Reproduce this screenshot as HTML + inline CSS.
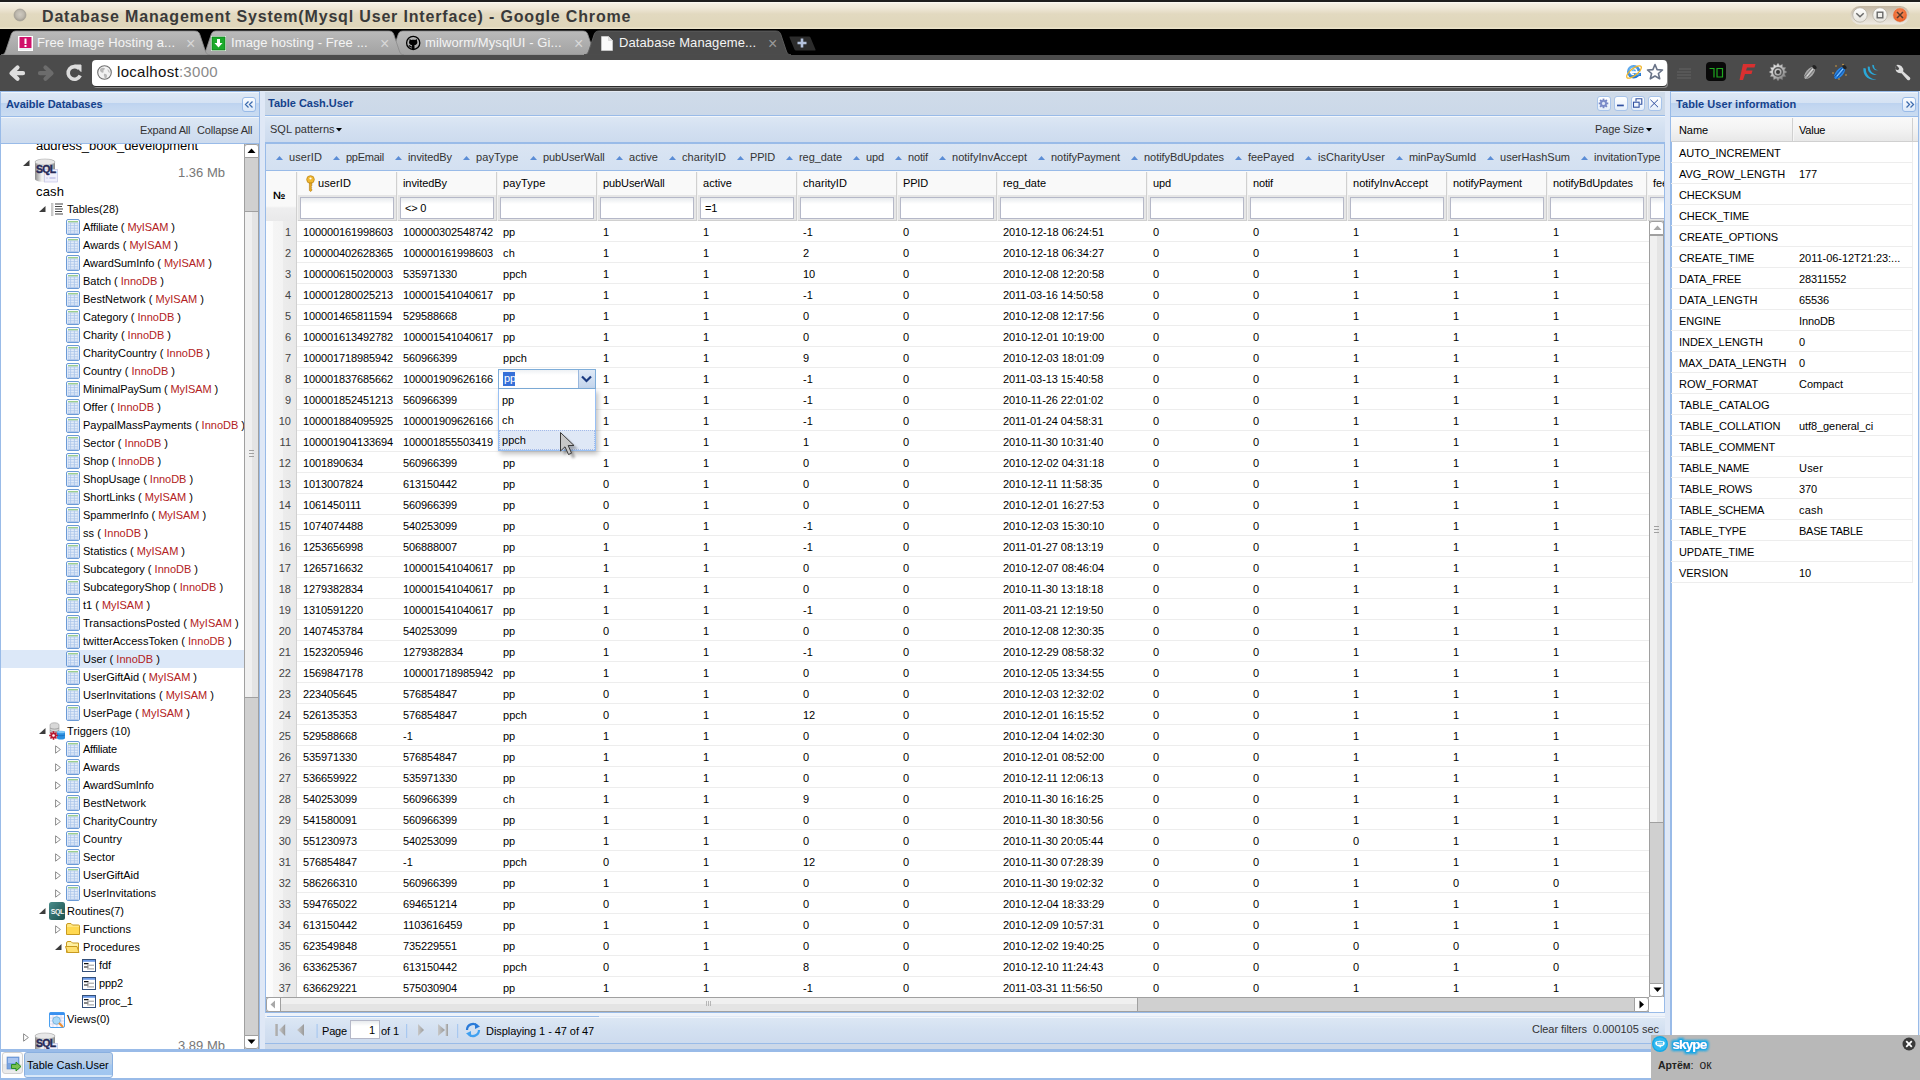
<!DOCTYPE html><html><head><meta charset="utf-8"><style>
*{box-sizing:border-box;margin:0;padding:0}
html,body{width:1920px;height:1080px;overflow:hidden;background:#fff}
body{font-family:"Liberation Sans",sans-serif;font-size:11px;color:#000;position:relative}
.a{position:absolute;white-space:nowrap}
svg{position:absolute;overflow:visible}

.ph{background:linear-gradient(#f0f6fd 0,#f0f6fd 1px,#dde8f5 1px,#d5e2f3 11px,#bcd2ef 11px,#c2d6f0 14px,#cadcf1 100%);border-bottom:1px solid #99bbe8}
.ptitle{font-weight:bold;color:#15428b;font-size:11px}
.tbar{background:linear-gradient(#f2f6fb 0,#f2f6fb 1px,#dce7f4 1px,#d3e0f1 50%,#cddbee 100%);border-bottom:1px solid #99bbe8}
.tool{width:15px;height:15px;border:1px solid #99bbe8;border-radius:3px;background:linear-gradient(#fbfdff,#dde9f8)}
.tn{color:#000;font-size:11px}
.eng{color:#b22222}

.gh{background:linear-gradient(#dae5f3 0,#d3e0f1 100%)}
.srt{color:#333}
.hd{color:#000}
.cell{position:absolute;line-height:21px;height:21px;white-space:nowrap}
.fin{position:absolute;border:1px solid #b5b8c8;background:linear-gradient(#e8ebee 0,#fff 6px,#fff 100%)}

.rw{position:absolute;left:0;width:1383px;height:21px;border-bottom:1px solid #ededed}
.rn{position:absolute;left:0;width:31px;height:21px;background:linear-gradient(90deg,#fdfdfd 0,#fbfbfb 7px,#f5f5f5 7px,#f3f3f3 17px,#ececec 17px,#e8e8e8 30px);border-right:1px solid #d0d0d0}
</style></head><body>
<div class="a" style="left:0px;top:0px;width:1920px;height:29px;background:linear-gradient(#1e1e1e 0,#1e1e1e 2px,#fdfbf5 2px,#f4eee1 4px,#efe8d8 8px,#e2d9c0 14px,#dfd6ba 27px,#ebe3cb 28px,#ebe3cb 29px)"></div>
<svg style="left:13px;top:8px" width="14" height="14"><defs><radialGradient id="gc" cx="50%" cy="45%" r="55%"><stop offset="0" stop-color="#cfcac0"/><stop offset="0.6" stop-color="#bdb8ae"/><stop offset="1" stop-color="#9e998f"/></radialGradient></defs><circle cx="7" cy="7" r="6" fill="url(#gc)" stroke="#a49f95" stroke-width="0.7"/></svg>
<div class="a " style="left:42px;top:6px;line-height:22px;height:22px;font-size:16px;font-weight:bold;color:#3a3a3a;letter-spacing:0.83px;">Database Management System(Mysql User Interface) - Google Chrome</div>
<svg style="left:1850px;top:5px" width="62" height="21"><defs>
<linearGradient id="wpill" x1="0" y1="0" x2="0" y2="1"><stop offset="0" stop-color="#c2b6a2"/><stop offset="1" stop-color="#efebe4"/></linearGradient>
<linearGradient id="wbtn" x1="0" y1="0" x2="0" y2="1"><stop offset="0" stop-color="#ffffff"/><stop offset="1" stop-color="#e6e3dc"/></linearGradient>
<radialGradient id="wcls" cx="50%" cy="40%" r="60%"><stop offset="0" stop-color="#f89060"/><stop offset="1" stop-color="#e85a20"/></radialGradient></defs>
<rect x="0.5" y="1" width="59" height="18.5" rx="9.2" fill="url(#wpill)"/>
<circle cx="10" cy="10" r="7.2" fill="url(#wbtn)" stroke="#a8a296" stroke-width="0.6"/>
<path d="M6.3 8.2 L10 11.8 L13.7 8.2" stroke="#6a6a6a" stroke-width="1.5" fill="none"/>
<circle cx="30" cy="10" r="7.2" fill="url(#wbtn)" stroke="#a8a296" stroke-width="0.6"/>
<rect x="27.2" y="7.2" width="5.6" height="5.6" stroke="#666" stroke-width="1.4" fill="none"/>
<circle cx="50" cy="10" r="7.2" fill="url(#wcls)" stroke="#d8cfc0" stroke-width="0.6"/>
<path d="M47 7 L53 13 M53 7 L47 13" stroke="#5a3a2a" stroke-width="1.5"/>
</svg>
<div class="a" style="left:0px;top:29px;width:1920px;height:26px;background:#000"></div>
<svg style="left:388px;top:31px" width="210" height="24"><defs><linearGradient id="tg" x1="0" y1="0" x2="0" y2="1"><stop offset="0" stop-color="#bababa"/><stop offset="1" stop-color="#a2a2a2"/></linearGradient></defs>
<path d="M0 24 C3 24 4 22 5 19 L10 4 C11 1 12 0 16 0 L194 0 C198 0 199 1 200 4 L205 19 C206 22 207 24 210 24 Z" fill="url(#tg)" stroke="#8a8a8a" stroke-width="0.8"/></svg>
<svg style="left:201px;top:31px" width="203" height="24"><defs><linearGradient id="tg" x1="0" y1="0" x2="0" y2="1"><stop offset="0" stop-color="#bababa"/><stop offset="1" stop-color="#a2a2a2"/></linearGradient></defs>
<path d="M0 24 C3 24 4 22 5 19 L10 4 C11 1 12 0 16 0 L187 0 C191 0 192 1 193 4 L198 19 C199 22 200 24 203 24 Z" fill="url(#tg)" stroke="#8a8a8a" stroke-width="0.8"/></svg>
<svg style="left:1px;top:31px" width="209" height="24"><defs><linearGradient id="tg" x1="0" y1="0" x2="0" y2="1"><stop offset="0" stop-color="#bababa"/><stop offset="1" stop-color="#a2a2a2"/></linearGradient></defs>
<path d="M0 24 C3 24 4 22 5 19 L10 4 C11 1 12 0 16 0 L193 0 C197 0 198 1 199 4 L204 19 C205 22 206 24 209 24 Z" fill="url(#tg)" stroke="#8a8a8a" stroke-width="0.8"/></svg>
<svg style="left:584px;top:31px" width="207" height="24"><defs><linearGradient id="tg" x1="0" y1="0" x2="0" y2="1"><stop offset="0" stop-color="#bababa"/><stop offset="1" stop-color="#a2a2a2"/></linearGradient></defs>
<path d="M0 24 C3 24 4 22 5 19 L10 4 C11 1 12 0 16 0 L191 0 C195 0 196 1 197 4 L202 19 C203 22 204 24 207 24 Z" fill="#4b4b4b" stroke="#606060" stroke-width="0.9"/><rect x="0" y="23.2" width="207" height="1" fill="#4b4b4b"/></svg>
<svg style="left:18px;top:36px" width="15" height="15"><rect x="0" y="0" width="15" height="15" fill="#fff"/><rect x="1.5" y="1" width="12" height="11" fill="#d0106a"/><rect x="1.5" y="12" width="12" height="2" fill="#e8f0f0"/><rect x="6.5" y="2.5" width="2" height="5.5" fill="#fff"/><rect x="6.5" y="9" width="2" height="2" fill="#fff"/></svg>
<div class="a " style="left:37px;top:33px;line-height:20px;height:20px;font-size:13px;color:#f4f4f4;letter-spacing:0.1px">Free Image Hosting a...</div>
<div class="a " style="left:186px;top:34px;letter-spacing:-0.344px;line-height:20px;height:20px;font-size:16px;color:#d8d8d8">×</div>
<svg style="left:211px;top:36px" width="15" height="15"><rect x="0" y="0" width="15" height="15" fill="#fff"/><rect x="1" y="1" width="13" height="13" fill="#1aaa2a" stroke="#0e7a18" stroke-width="0.8"/><path d="M6 3 h3 v4 h2.5 L7.5 11.5 L3.5 7 H6 Z" fill="#fff"/></svg>
<div class="a " style="left:231px;top:33px;line-height:20px;height:20px;font-size:13px;color:#f4f4f4;letter-spacing:0.1px">Image hosting - Free ...</div>
<div class="a " style="left:380px;top:34px;letter-spacing:-0.344px;line-height:20px;height:20px;font-size:16px;color:#d8d8d8">×</div>
<svg style="left:406px;top:36px" width="15" height="15"><circle cx="7.2" cy="6.9" r="6.6" fill="none" stroke="#000" stroke-width="1.3"/><path d="M3.4 4.9 L3.6 2.9 L5.3 3.9 C6.4 3.6 8 3.6 9.1 3.9 L10.8 2.9 L11 4.9 C11.6 5.7 11.5 7.3 10.5 8.2 C9.8 8.8 9 9 8.5 9.1 V13 H5.9 V9.1 C5.4 9 4.6 8.8 3.9 8.2 C2.9 7.3 2.8 5.7 3.4 4.9 Z" fill="#000"/><path d="M2.8 9.6 C4 9.8 4.5 11.2 6 11" stroke="#000" stroke-width="1.1" fill="none"/></svg>
<div class="a " style="left:425px;top:33px;line-height:20px;height:20px;font-size:13px;color:#f4f4f4;letter-spacing:0.1px">milworm/MysqlUI - Gi...</div>
<div class="a " style="left:574px;top:34px;letter-spacing:-0.344px;line-height:20px;height:20px;font-size:16px;color:#d8d8d8">×</div>
<svg style="left:601px;top:36px" width="12" height="15"><path d="M0.5 0.5 H7.5 L11.5 4.5 V14.5 H0.5 Z" fill="#fafafa" stroke="#ddd" stroke-width="0.6"/><path d="M7.5 0.5 V4.5 H11.5" fill="#e0e0e0" stroke="#ccc" stroke-width="0.6"/></svg>
<div class="a " style="left:619px;top:33px;line-height:20px;height:20px;font-size:13px;color:#f4f4f4;letter-spacing:0.1px">Database Manageme...</div>
<div class="a " style="left:768px;top:34px;letter-spacing:-0.344px;line-height:20px;height:20px;font-size:16px;color:#9a9a9a">×</div>
<svg style="left:789px;top:36px" width="28" height="15"><path d="M1 0.5 Q0 0.5 0.5 1.5 L5.5 13.5 Q6 14.5 7 14.5 H26 Q27 14.5 26.5 13.5 L21.5 1.5 Q21 0.5 20 0.5 Z" fill="#2c2c2c"/><path d="M8.5 7 H17.5 M13 2.5 V11.5" stroke="#b4c2dc" stroke-width="2.6"/></svg>
<div class="a" style="left:0px;top:55px;width:1920px;height:36px;background:#4b4b4b"></div>
<svg style="left:0px;top:55px" width="90" height="36"><g fill="none" stroke-linecap="round" stroke-linejoin="round" stroke-width="4.2"><path d="M17.5 12.5 L11.5 18.2 L17.5 23.8 M12 18.2 H23" stroke="#dedede"/><path d="M45.5 12.5 L51.5 18.2 L45.5 23.8 M51 18.2 H40" stroke="#6c6c6c"/></g><path d="M79 13.5 A6.3 6.3 0 1 0 80.2 20.5" stroke="#dcdcdc" stroke-width="3.6" fill="none"/><path d="M74.5 10 L81 10 L81 16.5 Z" fill="#dcdcdc" stroke="#dcdcdc" stroke-width="1" stroke-linejoin="round"/></svg>
<div class="a" style="left:92px;top:60px;width:1575px;height:26px;background:#fff;border-radius:4px;box-shadow:0 1px 0 #2c2c2c,1px 2px 0 #8a8a8a"></div>
<svg style="left:97px;top:65px" width="15" height="15"><circle cx="7.5" cy="7.5" r="6.8" fill="#f2f2f2" stroke="#6e6e6e" stroke-width="1.1"/><path d="M3.5 3.5 C5 2.5 7 2.5 8 3.5 C7.5 5 6 5 6.5 6.5 C7 8 5 8 4 7 C3 6 2.5 5 3.5 3.5 Z" fill="#b8b8b8"/><path d="M7 9 C8.5 8.5 10 9.5 10 11 C10 12.5 9 13.5 8 13.8 C7.2 12.5 7.5 11 6.8 10.2 Z" fill="#b8b8b8"/><path d="M10.5 4 C12 5 13 6.5 12.8 8 C11.5 7.5 10.5 6.5 10.5 4 Z" fill="#c4c4c4"/></svg>
<div class="a " style="left:117px;top:61px;line-height:21px;height:21px;font-size:15px;color:#111;letter-spacing:0.3px">localhost<span style="color:#8a8a8a">:3000</span></div>
<svg style="left:1625px;top:63px" width="18" height="18"><defs><radialGradient id="ieg" cx="40%" cy="35%" r="65%"><stop offset="0" stop-color="#8ad0ff"/><stop offset="1" stop-color="#1a70d0"/></radialGradient></defs><circle cx="8.7" cy="8.7" r="6.7" fill="url(#ieg)"/><circle cx="8.7" cy="8.4" r="3.6" fill="#fff"/><circle cx="8.7" cy="8.4" r="2.2" fill="url(#ieg)"/><rect x="5" y="8.2" width="10.5" height="1.8" fill="#fff"/><rect x="9" y="10" width="7" height="3" fill="url(#ieg)"/><ellipse cx="9" cy="9" rx="9" ry="3.4" transform="rotate(-38 9 9)" fill="none" stroke="#f0b428" stroke-width="1.3"/></svg>
<svg style="left:1646px;top:63px" width="18" height="18"><path d="M9 1.5 L11.1 6.6 L16.5 7 L12.4 10.5 L13.7 15.8 L9 13 L4.3 15.8 L5.6 10.5 L1.5 7 L6.9 6.6 Z" fill="none" stroke="#6a7488" stroke-width="1.6" stroke-linejoin="round"/></svg>
<svg style="left:1677px;top:67px" width="16" height="12"><g fill="#575757"><rect x="2" y="1" width="12" height="2"/><rect x="0" y="4" width="14" height="2"/><rect x="0" y="7" width="14" height="2"/><rect x="0" y="10" width="14" height="2"/></g></svg>
<svg style="left:1706px;top:62px" width="20" height="19"><rect x="0" y="0" width="20" height="19" rx="4" fill="#080808"/><path d="M3.5 6.5 H8 V15.5 M11 6.5 H16.5 V15 H11 Z" stroke="#1fa81f" stroke-width="1.2" fill="none"/></svg>
<svg style="left:1740px;top:63px" width="16" height="18"><path d="M3 1 H15.5 L14.5 4.5 H7 L6 7.5 H12.5 L11.5 11 H5 L3 17 H-0.5 Z" fill="#d83030"/></svg>
<svg style="left:1769px;top:63px" width="18" height="18"><defs><linearGradient id="gg" x1="0" y1="0" x2="1" y2="1"><stop offset="0" stop-color="#ffffff"/><stop offset="0.5" stop-color="#b8b8b8"/><stop offset="1" stop-color="#6a6a6a"/></linearGradient></defs><polygon points="9.00,0.00 10.71,2.62 13.50,1.21 13.67,4.33 16.79,4.50 15.38,7.29 18.00,9.00 15.38,10.71 16.79,13.50 13.67,13.67 13.50,16.79 10.71,15.38 9.00,18.00 7.29,15.38 4.50,16.79 4.33,13.67 1.21,13.50 2.62,10.71 0.00,9.00 2.62,7.29 1.21,4.50 4.33,4.33 4.50,1.21 7.29,2.62" fill="url(#gg)" stroke="#777" stroke-width="0.4"/><circle cx="9" cy="9" r="4.3" fill="none" stroke="#5a5a5a" stroke-width="1.6"/><circle cx="9" cy="9" r="2" fill="#3a3a3a"/></svg>
<svg style="left:1800px;top:63px" width="20" height="19"><g transform="rotate(-50 10 9.5)"><ellipse cx="9.5" cy="9.5" rx="7.5" ry="3.6" fill="#a8a8a8"/><path d="M3 8 H15 M3 11 H15" stroke="#6a6a6a" stroke-width="0.8"/><path d="M5 9.5 H15" stroke="#e8e8e8" stroke-width="0.8"/><ellipse cx="17" cy="9.5" rx="1.8" ry="2.4" fill="#222"/></g></svg>
<svg style="left:1830px;top:63px" width="20" height="19"><g transform="rotate(-50 10 9.5)"><ellipse cx="9.5" cy="9.5" rx="7.5" ry="3.6" fill="#2a84e0"/><path d="M3 8 H15 M3 11 H15" stroke="#0a4aa0" stroke-width="0.8"/><path d="M5 9.5 H15" stroke="#a8d8ff" stroke-width="0.8"/><ellipse cx="17" cy="9.5" rx="1.8" ry="2.4" fill="#222"/></g><g fill="#d8a040"><circle cx="3" cy="10" r="0.8"/><circle cx="9" cy="16" r="0.8"/><circle cx="6" cy="3" r="0.8"/><circle cx="16" cy="12" r="0.8"/><circle cx="13" cy="1.5" r="0.8"/></g></svg>
<svg style="left:1862px;top:64px" width="18" height="17"><g fill="#2aa8d8"><path d="M1.5 4 C0.5 11 6 17 14.5 15.5 C9 15.5 3.5 11 3.8 4.5 Z"/><path d="M5.8 2.5 C5.2 8.5 10 12 15.5 10.6 C11.5 10.6 7.5 7.5 7.8 2.8 Z"/><path d="M10.3 0.8 C10 4.5 13 7 16.2 6.2 C13.5 6 11.8 4 12 1.2 Z"/></g></svg>
<svg style="left:1893px;top:64px" width="19" height="18"><path d="M2.5 1.5 A5.5 5.5 0 0 0 8.5 9.2 L14.5 16 A1.8 1.8 0 0 0 17 13.5 L10.2 7.5 A5.5 5.5 0 0 0 3.2 1 L6.2 4.2 L5.2 6.2 L2.2 5.2 Z" fill="#dcdcdc"/></svg>
<div class="a" style="left:0px;top:91px;width:1920px;height:989px;background:#dfe8f6"></div>
<div class="a" style="left:0px;top:91px;width:260px;height:960px;border:1px solid #99bbe8;background:#fff"></div>
<div class="a ph" style="left:1px;top:92px;width:258px;height:25px;"></div>
<div class="a ptitle" style="left:6px;top:92px;letter-spacing:-0.013px;line-height:24px;height:24px;">Avaible Databases</div>
<div class="a" style="left:242px;top:97px;width:14px;height:15px;border:1px solid #99bbe8;border-radius:3px;background:linear-gradient(#fafcff,#dbe8f8)"></div>
<svg style="left:244px;top:100px" width="10" height="10"><path d="M4.5 1.5 L1.5 4.5 L4.5 7.5 M8.5 1.5 L5.5 4.5 L8.5 7.5" stroke="#3d6cae" stroke-width="1.3" fill="none"/></svg>
<div class="a tbar" style="left:1px;top:117px;width:258px;height:27px;"></div>
<div class="a " style="left:140px;top:118px;letter-spacing:-0.159px;line-height:25px;height:25px;color:#333">Expand All</div>
<div class="a " style="left:197px;top:118px;letter-spacing:-0.174px;line-height:25px;height:25px;color:#333">Collapse All</div>
<svg width="0" height="0" style="left:0;top:0"><defs>
<symbol id="itab" viewBox="0 0 14 16"><rect x="0.5" y="0.5" width="13" height="15" rx="1.5" fill="#f8fbff" stroke="#6b9ad6" stroke-width="1"/><rect x="2" y="2" width="10" height="1.5" fill="#9ccf8c"/><rect x="2" y="4" width="10" height="10.5" fill="#e4edf9"/><g stroke="#aac4ea" stroke-width="0.8"><path d="M2 6.6 H12 M2 9.2 H12 M2 11.8 H12 M2 14.2 H12 M4.6 4 V14.5 M8.4 4 V14.5"/></g><rect x="2" y="4" width="10" height="10.5" fill="none" stroke="#aac4ea" stroke-width="0.7"/></symbol>
<symbol id="iexp" viewBox="0 0 7 6"><path d="M6.5 0 V6 H0 Z" fill="#3c3c3c"/></symbol>
<symbol id="icol" viewBox="0 0 6 9"><path d="M0.6 0.8 L5.4 4.5 L0.6 8.2 Z" fill="#fff" stroke="#8c8c8c" stroke-width="1"/></symbol>
<symbol id="isql" viewBox="0 0 25 25"><defs><linearGradient id="cyl" x1="0" x2="1"><stop offset="0" stop-color="#8a8a8a"/><stop offset="0.35" stop-color="#f4f4f4"/><stop offset="0.7" stop-color="#d4d4d4"/><stop offset="1" stop-color="#8a8a8a"/></linearGradient></defs><path d="M2 4 C2 0 22 0 22 4 V21 C22 25 2 25 2 21 Z" fill="url(#cyl)"/><ellipse cx="12" cy="4" rx="10" ry="3" fill="#e8e8e8" stroke="#b0b0b0" stroke-width="0.6"/><rect x="11.5" y="11.5" width="13" height="12.5" fill="#f0f0fc" stroke="#c4c4e4" stroke-width="0.7"/><path d="M13.5 20 H14.5 M16.5 20 H22.5" stroke="#a0a0d8" stroke-width="0.9"/><text x="3" y="14.5" font-family="Liberation Sans" font-weight="bold" font-size="10.5" fill="#262a58" letter-spacing="-0.7" stroke="#262a58" stroke-width="0.4">SQL</text></symbol>
<symbol id="ilist" viewBox="0 0 13 13"><rect x="0.5" y="0" width="1.5" height="13" fill="#d8d8d8" stroke="#aaa" stroke-width="0.5"/><g stroke="#444" stroke-width="1.2"><path d="M4 1 H12 M4 3.5 H11 M4 6 H12 M4 8.5 H11 M4 11 H12"/></g></symbol>
<symbol id="itrig" viewBox="0 0 17 18"><path d="M1 3 C1 0 10 0 10 3 V11 C10 13 1 13 1 11 Z" fill="#d8d8d8" stroke="#9a9a9a" stroke-width="0.6"/><path d="M1 6 C3 7.5 8 7.5 10 6 M1 8.5 C3 10 8 10 10 8.5" stroke="#8a8a8a" stroke-width="0.7" fill="none"/><path d="M8 10 C8 8.5 16 8.5 16 10 V16 C16 18 8 18 8 16 Z" fill="#2a90e0"/><ellipse cx="12" cy="10" rx="4" ry="1.3" fill="#7ec8f8"/><path d="M8 13 C10 14 14 14 16 13" stroke="#1560b0" stroke-width="0.6" fill="none"/><g transform="translate(4.5 13.5)"><g fill="#b81830"><rect x="-0.8" y="-4.3" width="1.6" height="2" transform="rotate(0)"/><rect x="-0.8" y="-4.3" width="1.6" height="2" transform="rotate(45)"/><rect x="-0.8" y="-4.3" width="1.6" height="2" transform="rotate(90)"/><rect x="-0.8" y="-4.3" width="1.6" height="2" transform="rotate(135)"/><rect x="-0.8" y="-4.3" width="1.6" height="2" transform="rotate(180)"/><rect x="-0.8" y="-4.3" width="1.6" height="2" transform="rotate(225)"/><rect x="-0.8" y="-4.3" width="1.6" height="2" transform="rotate(270)"/><rect x="-0.8" y="-4.3" width="1.6" height="2" transform="rotate(315)"/></g><circle r="3" fill="#b81830"/><circle r="1.3" fill="#fff"/></g></symbol>
<symbol id="irout" viewBox="0 0 16 18"><defs><linearGradient id="rg" x1="0" y1="0" x2="1" y2="1"><stop offset="0" stop-color="#4a8c8a"/><stop offset="1" stop-color="#1a4e4c"/></linearGradient></defs><rect x="0" y="0" width="16" height="18" rx="2.5" fill="url(#rg)"/><text x="1.8" y="12" font-family="Liberation Sans" font-weight="bold" font-size="7" fill="#f4f4f4" letter-spacing="-0.4">SQL</text></symbol>
<symbol id="ifold" viewBox="0 0 14 12"><path d="M0.5 2 Q0.5 0.5 2 0.5 H5 L6.5 2 H12.5 Q13.5 2 13.5 3 V11.5 H0.5 Z" fill="#ffe680" stroke="#c89a20" stroke-width="1"/><rect x="1" y="4" width="12" height="7" fill="#ffd850"/></symbol>
<symbol id="ifoldo" viewBox="0 0 15 12"><path d="M1.5 2 Q1.5 0.5 3 0.5 H6 L7.5 2 H13.5 V11.5 H1.5 Z" fill="#fff0a0" stroke="#c89a20" stroke-width="1"/><path d="M0.5 5.5 H12 L14 11.5 H2.5 Z" fill="#ffe070" stroke="#c89a20" stroke-width="1"/></symbol>
<symbol id="iproc" viewBox="0 0 14 13"><rect x="0.5" y="0.5" width="13" height="12" fill="#fff" stroke="#34507a" stroke-width="1"/><rect x="1" y="1" width="12" height="1.8" fill="#6a9ae8"/><path d="M2 4.6 H6.5 M2 8 H6.5" stroke="#111" stroke-width="1.1"/><path d="M5 6.2 H12 M5 9.9 H12" stroke="#8a8a8a" stroke-width="0.9"/></symbol>
<symbol id="iview" viewBox="0 0 16 16"><rect x="0.5" y="0.5" width="15" height="15" rx="1.5" fill="#f8f8ff" stroke="#4aa0f0" stroke-width="1"/><rect x="0.5" y="0.5" width="15" height="2.5" fill="#3a90f0"/><g stroke="#d0d0e8" stroke-width="0.7"><path d="M1 6 H15 M1 9 H15 M1 12 H15 M4 3 V15 M8 3 V15 M12 3 V15"/></g><circle cx="7.5" cy="8.5" r="3.8" fill="#a8d8f8" stroke="#6aa8d8" stroke-width="0.8"/><path d="M10 11 L14 15" stroke="#f09030" stroke-width="2"/></symbol>
</defs></svg>
<div class="a" style="left:1px;top:144px;width:243px;height:905px;overflow:hidden">
<div class="a" style="left:35px;top:-7px;line-height:18px;height:18px;letter-spacing:-0.056px;font-size:13px">address_book_development</div>
<svg style="left:22px;top:16px" width="7" height="6"><use href="#iexp" width="7" height="6"/></svg>
<svg style="left:32px;top:14px" width="25" height="25"><use href="#isql" width="25" height="25"/></svg>
<div class="a" style="left:177px;top:20px;line-height:18px;height:18px;letter-spacing:0.004px;font-size:13px;color:#777">1.36 Mb</div>
<div class="a" style="left:35px;top:39px;line-height:18px;height:18px;letter-spacing:0.135px;font-size:13px">cash</div>
<svg style="left:38px;top:62px" width="7" height="6"><use href="#iexp" width="7" height="6"/></svg>
<svg style="left:50px;top:59px" width="13" height="13"><use href="#ilist" width="13" height="13"/></svg>
<div class="a" style="left:66px;top:56px;line-height:18px;height:18px;letter-spacing:0.042px;">Tables(28)</div>
<svg style="left:65px;top:75px" width="14" height="16"><use href="#itab" width="14" height="16"/></svg>
<div class="a" style="left:82px;top:74px;line-height:18px;height:18px;letter-spacing:-0.106px;">Affiliate ( <span class="eng">MyISAM</span> )</div>
<svg style="left:65px;top:93px" width="14" height="16"><use href="#itab" width="14" height="16"/></svg>
<div class="a" style="left:82px;top:92px;line-height:18px;height:18px;letter-spacing:0.016px;">Awards ( <span class="eng">MyISAM</span> )</div>
<svg style="left:65px;top:111px" width="14" height="16"><use href="#itab" width="14" height="16"/></svg>
<div class="a" style="left:82px;top:110px;line-height:18px;height:18px;letter-spacing:-0.052px;">AwardSumInfo ( <span class="eng">MyISAM</span> )</div>
<svg style="left:65px;top:129px" width="14" height="16"><use href="#itab" width="14" height="16"/></svg>
<div class="a" style="left:82px;top:128px;line-height:18px;height:18px;letter-spacing:-0.020px;">Batch ( <span class="eng">InnoDB</span> )</div>
<svg style="left:65px;top:147px" width="14" height="16"><use href="#itab" width="14" height="16"/></svg>
<div class="a" style="left:82px;top:146px;line-height:18px;height:18px;letter-spacing:0.027px;">BestNetwork ( <span class="eng">MyISAM</span> )</div>
<svg style="left:65px;top:165px" width="14" height="16"><use href="#itab" width="14" height="16"/></svg>
<div class="a" style="left:82px;top:164px;line-height:18px;height:18px;letter-spacing:0.010px;">Category ( <span class="eng">InnoDB</span> )</div>
<svg style="left:65px;top:183px" width="14" height="16"><use href="#itab" width="14" height="16"/></svg>
<div class="a" style="left:82px;top:182px;line-height:18px;height:18px;letter-spacing:-0.001px;">Charity ( <span class="eng">InnoDB</span> )</div>
<svg style="left:65px;top:201px" width="14" height="16"><use href="#itab" width="14" height="16"/></svg>
<div class="a" style="left:82px;top:200px;line-height:18px;height:18px;letter-spacing:0.018px;">CharityCountry ( <span class="eng">InnoDB</span> )</div>
<svg style="left:65px;top:219px" width="14" height="16"><use href="#itab" width="14" height="16"/></svg>
<div class="a" style="left:82px;top:218px;line-height:18px;height:18px;letter-spacing:0.017px;">Country ( <span class="eng">InnoDB</span> )</div>
<svg style="left:65px;top:237px" width="14" height="16"><use href="#itab" width="14" height="16"/></svg>
<div class="a" style="left:82px;top:236px;line-height:18px;height:18px;letter-spacing:-0.105px;">MinimalPaySum ( <span class="eng">MyISAM</span> )</div>
<svg style="left:65px;top:255px" width="14" height="16"><use href="#itab" width="14" height="16"/></svg>
<div class="a" style="left:82px;top:254px;line-height:18px;height:18px;letter-spacing:0.023px;">Offer ( <span class="eng">InnoDB</span> )</div>
<svg style="left:65px;top:273px" width="14" height="16"><use href="#itab" width="14" height="16"/></svg>
<div class="a" style="left:82px;top:272px;line-height:18px;height:18px;letter-spacing:-0.000px;">PaypalMassPayments ( <span class="eng">InnoDB</span> )</div>
<svg style="left:65px;top:291px" width="14" height="16"><use href="#itab" width="14" height="16"/></svg>
<div class="a" style="left:82px;top:290px;line-height:18px;height:18px;letter-spacing:0.001px;">Sector ( <span class="eng">InnoDB</span> )</div>
<svg style="left:65px;top:309px" width="14" height="16"><use href="#itab" width="14" height="16"/></svg>
<div class="a" style="left:82px;top:308px;line-height:18px;height:18px;letter-spacing:-0.058px;">Shop ( <span class="eng">InnoDB</span> )</div>
<svg style="left:65px;top:327px" width="14" height="16"><use href="#itab" width="14" height="16"/></svg>
<div class="a" style="left:82px;top:326px;line-height:18px;height:18px;letter-spacing:-0.034px;">ShopUsage ( <span class="eng">InnoDB</span> )</div>
<svg style="left:65px;top:345px" width="14" height="16"><use href="#itab" width="14" height="16"/></svg>
<div class="a" style="left:82px;top:344px;line-height:18px;height:18px;letter-spacing:-0.001px;">ShortLinks ( <span class="eng">MyISAM</span> )</div>
<svg style="left:65px;top:363px" width="14" height="16"><use href="#itab" width="14" height="16"/></svg>
<div class="a" style="left:82px;top:362px;line-height:18px;height:18px;letter-spacing:-0.049px;">SpammerInfo ( <span class="eng">MyISAM</span> )</div>
<svg style="left:65px;top:381px" width="14" height="16"><use href="#itab" width="14" height="16"/></svg>
<div class="a" style="left:82px;top:380px;line-height:18px;height:18px;letter-spacing:0.063px;">ss ( <span class="eng">InnoDB</span> )</div>
<svg style="left:65px;top:399px" width="14" height="16"><use href="#itab" width="14" height="16"/></svg>
<div class="a" style="left:82px;top:398px;line-height:18px;height:18px;letter-spacing:-0.003px;">Statistics ( <span class="eng">MyISAM</span> )</div>
<svg style="left:65px;top:417px" width="14" height="16"><use href="#itab" width="14" height="16"/></svg>
<div class="a" style="left:82px;top:416px;line-height:18px;height:18px;letter-spacing:0.002px;">Subcategory ( <span class="eng">InnoDB</span> )</div>
<svg style="left:65px;top:435px" width="14" height="16"><use href="#itab" width="14" height="16"/></svg>
<div class="a" style="left:82px;top:434px;line-height:18px;height:18px;letter-spacing:-0.024px;">SubcategoryShop ( <span class="eng">InnoDB</span> )</div>
<svg style="left:65px;top:453px" width="14" height="16"><use href="#itab" width="14" height="16"/></svg>
<div class="a" style="left:82px;top:452px;line-height:18px;height:18px;letter-spacing:-0.017px;">t1 ( <span class="eng">MyISAM</span> )</div>
<svg style="left:65px;top:471px" width="14" height="16"><use href="#itab" width="14" height="16"/></svg>
<div class="a" style="left:82px;top:470px;line-height:18px;height:18px;letter-spacing:0.025px;">TransactionsPosted ( <span class="eng">MyISAM</span> )</div>
<svg style="left:65px;top:489px" width="14" height="16"><use href="#itab" width="14" height="16"/></svg>
<div class="a" style="left:82px;top:488px;line-height:18px;height:18px;letter-spacing:0.050px;">twitterAccessToken ( <span class="eng">InnoDB</span> )</div>
<div class="a" style="left:0;top:506px;width:243px;height:18px;background:#dce8f8"></div>
<svg style="left:65px;top:507px" width="14" height="16"><use href="#itab" width="14" height="16"/></svg>
<div class="a" style="left:82px;top:506px;line-height:18px;height:18px;letter-spacing:0.039px;">User ( <span class="eng">InnoDB</span> )</div>
<svg style="left:65px;top:525px" width="14" height="16"><use href="#itab" width="14" height="16"/></svg>
<div class="a" style="left:82px;top:524px;line-height:18px;height:18px;letter-spacing:-0.013px;">UserGiftAid ( <span class="eng">MyISAM</span> )</div>
<svg style="left:65px;top:543px" width="14" height="16"><use href="#itab" width="14" height="16"/></svg>
<div class="a" style="left:82px;top:542px;line-height:18px;height:18px;letter-spacing:0.008px;">UserInvitations ( <span class="eng">MyISAM</span> )</div>
<svg style="left:65px;top:561px" width="14" height="16"><use href="#itab" width="14" height="16"/></svg>
<div class="a" style="left:82px;top:560px;line-height:18px;height:18px;letter-spacing:0.002px;">UserPage ( <span class="eng">MyISAM</span> )</div>
<svg style="left:38px;top:584px" width="7" height="6"><use href="#iexp" width="7" height="6"/></svg>
<svg style="left:48px;top:578px" width="17" height="18"><use href="#itrig" width="17" height="18"/></svg>
<div class="a" style="left:66px;top:578px;line-height:18px;height:18px;letter-spacing:0.080px;">Triggers (10)</div>
<svg style="left:54px;top:601px" width="6" height="9"><use href="#icol" width="6" height="9"/></svg>
<svg style="left:65px;top:597px" width="14" height="16"><use href="#itab" width="14" height="16"/></svg>
<div class="a" style="left:82px;top:596px;line-height:18px;height:18px;letter-spacing:-0.230px;">Affiliate</div>
<svg style="left:54px;top:619px" width="6" height="9"><use href="#icol" width="6" height="9"/></svg>
<svg style="left:65px;top:615px" width="14" height="16"><use href="#itab" width="14" height="16"/></svg>
<div class="a" style="left:82px;top:614px;line-height:18px;height:18px;letter-spacing:0.053px;">Awards</div>
<svg style="left:54px;top:637px" width="6" height="9"><use href="#icol" width="6" height="9"/></svg>
<svg style="left:65px;top:633px" width="14" height="16"><use href="#itab" width="14" height="16"/></svg>
<div class="a" style="left:82px;top:632px;line-height:18px;height:18px;letter-spacing:-0.095px;">AwardSumInfo</div>
<svg style="left:54px;top:655px" width="6" height="9"><use href="#icol" width="6" height="9"/></svg>
<svg style="left:65px;top:651px" width="14" height="16"><use href="#itab" width="14" height="16"/></svg>
<div class="a" style="left:82px;top:650px;line-height:18px;height:18px;letter-spacing:0.059px;">BestNetwork</div>
<svg style="left:54px;top:673px" width="6" height="9"><use href="#icol" width="6" height="9"/></svg>
<svg style="left:65px;top:669px" width="14" height="16"><use href="#itab" width="14" height="16"/></svg>
<div class="a" style="left:82px;top:668px;line-height:18px;height:18px;letter-spacing:0.046px;">CharityCountry</div>
<svg style="left:54px;top:691px" width="6" height="9"><use href="#icol" width="6" height="9"/></svg>
<svg style="left:65px;top:687px" width="14" height="16"><use href="#itab" width="14" height="16"/></svg>
<div class="a" style="left:82px;top:686px;line-height:18px;height:18px;letter-spacing:0.069px;">Country</div>
<svg style="left:54px;top:709px" width="6" height="9"><use href="#icol" width="6" height="9"/></svg>
<svg style="left:65px;top:705px" width="14" height="16"><use href="#itab" width="14" height="16"/></svg>
<div class="a" style="left:82px;top:704px;line-height:18px;height:18px;letter-spacing:0.035px;">Sector</div>
<svg style="left:54px;top:727px" width="6" height="9"><use href="#icol" width="6" height="9"/></svg>
<svg style="left:65px;top:723px" width="14" height="16"><use href="#itab" width="14" height="16"/></svg>
<div class="a" style="left:82px;top:722px;line-height:18px;height:18px;letter-spacing:-0.021px;">UserGiftAid</div>
<svg style="left:54px;top:745px" width="6" height="9"><use href="#icol" width="6" height="9"/></svg>
<svg style="left:65px;top:741px" width="14" height="16"><use href="#itab" width="14" height="16"/></svg>
<div class="a" style="left:82px;top:740px;line-height:18px;height:18px;letter-spacing:0.017px;">UserInvitations</div>
<svg style="left:38px;top:764px" width="7" height="6"><use href="#iexp" width="7" height="6"/></svg>
<svg style="left:48px;top:758px" width="16" height="18"><use href="#irout" width="16" height="18"/></svg>
<div class="a" style="left:66px;top:758px;line-height:18px;height:18px;letter-spacing:0.013px;">Routines(7)</div>
<svg style="left:54px;top:781px" width="6" height="9"><use href="#icol" width="6" height="9"/></svg>
<svg style="left:65px;top:779px" width="14" height="12"><use href="#ifold" width="14" height="12"/></svg>
<div class="a" style="left:82px;top:776px;line-height:18px;height:18px;letter-spacing:0.034px;">Functions</div>
<svg style="left:54px;top:800px" width="7" height="6"><use href="#iexp" width="7" height="6"/></svg>
<svg style="left:64px;top:797px" width="15" height="12"><use href="#ifoldo" width="15" height="12"/></svg>
<div class="a" style="left:82px;top:794px;line-height:18px;height:18px;letter-spacing:0.075px;">Procedures</div>
<svg style="left:81px;top:815px" width="14" height="13"><use href="#iproc" width="14" height="13"/></svg>
<div class="a" style="left:98px;top:812px;line-height:18px;height:18px;letter-spacing:-0.077px;">fdf</div>
<svg style="left:81px;top:833px" width="14" height="13"><use href="#iproc" width="14" height="13"/></svg>
<div class="a" style="left:98px;top:830px;line-height:18px;height:18px;letter-spacing:-0.118px;">ppp2</div>
<svg style="left:81px;top:851px" width="14" height="13"><use href="#iproc" width="14" height="13"/></svg>
<div class="a" style="left:98px;top:848px;line-height:18px;height:18px;letter-spacing:0.061px;">proc_1</div>
<svg style="left:48px;top:868px" width="16" height="16"><use href="#iview" width="16" height="16"/></svg>
<div class="a" style="left:66px;top:866px;line-height:18px;height:18px;letter-spacing:0.027px;">Views(0)</div>
<svg style="left:22px;top:889px" width="6" height="9"><use href="#icol" width="6" height="9"/></svg>
<svg style="left:32px;top:888px" width="25" height="25"><use href="#isql" width="25" height="25"/></svg>
<div class="a" style="left:177px;top:893px;line-height:18px;height:18px;letter-spacing:0.004px;font-size:13px;color:#777">3.89 Mb</div>
</div>
<div class="a" style="left:244px;top:144px;width:15px;height:905px;background:#d0d0d0;border-left:1px solid #a0a0a0;border-right:1px solid #a0a0a0"></div>
<div class="a" style="left:244px;top:144px;width:15px;height:14px;background:#fff;border:1px solid #a0a0a0;border-radius:3px 3px 0 0"></div>
<svg style="left:247px;top:148px" width="9" height="6"><path d="M0.5 5 L4.5 0.5 L8.5 5 Z" fill="#000"/></svg>
<div class="a" style="left:244px;top:211px;width:15px;height:487px;background:linear-gradient(90deg,#f0f0f0 0,#f0f0f0 50%,#e4e4e4 50%);border:1px solid #a0a0a0"></div>
<svg style="left:249px;top:449px" width="6" height="8"><path d="M0 1.5 H5 M0 4.5 H5 M0 7.5 H5" stroke="#a0a0a0" stroke-width="1"/></svg>
<div class="a" style="left:244px;top:1035px;width:15px;height:14px;background:#fff;border:1px solid #a0a0a0;border-radius:0 0 3px 3px"></div>
<svg style="left:247px;top:1039px" width="9" height="6"><path d="M0.5 0.5 L4.5 5 L8.5 0.5 Z" fill="#000"/></svg>
<div class="a" style="left:265px;top:91px;width:1400px;height:960px;background:#dfe8f6"></div>
<div class="a" style="left:265px;top:91px;width:1400px;height:24px;background:linear-gradient(#e4eaf2 0,#e4eaf2 1px,#cfdbe9 1px,#cbd8e8 100%)"></div>
<div class="a" style="left:265px;top:115px;width:1400px;height:1px;background:#99bbe8"></div>
<div class="a ptitle" style="left:268px;top:91px;letter-spacing:-0.013px;line-height:24px;height:24px;">Table Cash.User</div>
<div class="a" style="left:1597px;top:96px;width:14px;height:15px;border:1px solid #a8c4ea;border-radius:3px;background:linear-gradient(#ffffff,#e4eefa)"></div>
<div class="a" style="left:1614px;top:96px;width:14px;height:15px;border:1px solid #a8c4ea;border-radius:3px;background:linear-gradient(#ffffff,#e4eefa)"></div>
<div class="a" style="left:1631px;top:96px;width:14px;height:15px;border:1px solid #a8c4ea;border-radius:3px;background:linear-gradient(#ffffff,#e4eefa)"></div>
<div class="a" style="left:1648px;top:96px;width:14px;height:15px;border:1px solid #a8c4ea;border-radius:3px;background:linear-gradient(#ffffff,#e4eefa)"></div>
<svg style="left:1597px;top:96px" width="65" height="15">
<g transform="translate(6.5 7.4)"><g fill="#7484c4"><rect x="-0.9" y="-4.8" width="1.8" height="2.4" transform="rotate(0)"/><rect x="-0.9" y="-4.8" width="1.8" height="2.4" transform="rotate(45)"/><rect x="-0.9" y="-4.8" width="1.8" height="2.4" transform="rotate(90)"/><rect x="-0.9" y="-4.8" width="1.8" height="2.4" transform="rotate(135)"/><rect x="-0.9" y="-4.8" width="1.8" height="2.4" transform="rotate(180)"/><rect x="-0.9" y="-4.8" width="1.8" height="2.4" transform="rotate(225)"/><rect x="-0.9" y="-4.8" width="1.8" height="2.4" transform="rotate(270)"/><rect x="-0.9" y="-4.8" width="1.8" height="2.4" transform="rotate(315)"/></g><circle r="3.4" fill="#7a8ac8"/><circle r="1.6" fill="#dfe6f6"/></g>
<rect x="20" y="8.6" width="6.8" height="1.7" fill="#3050a0"/>
<rect x="36.5" y="6.2" width="5.6" height="5" fill="none" stroke="#3050a0" stroke-width="1.1"/><path d="M39 5.6 V2.8 H44.8 V8.2 H42.6" fill="none" stroke="#3050a0" stroke-width="1.1"/>
<path d="M53.4 3.7 L61 11.2 M61 3.7 L53.4 11.2" stroke="#3050a0" stroke-width="1"/>
</svg>
<div class="a tbar" style="left:265px;top:116px;width:1400px;height:27px;"></div>
<div class="a " style="left:270px;top:117px;letter-spacing:0.016px;line-height:25px;height:25px;color:#333">SQL patterns</div>
<svg style="left:336px;top:128px" width="6" height="4"><path d="M0 0 H6 L3 3.5 Z" fill="#000"/></svg>
<div class="a " style="left:1595px;top:117px;letter-spacing:-0.127px;line-height:25px;height:25px;color:#333">Page Size</div>
<svg style="left:1646px;top:128px" width="7" height="4"><path d="M0 0 H6 L3 3.5 Z" fill="#000"/></svg>
<div class="a" style="left:265px;top:143px;width:1400px;height:870px;border:1px solid #99bbe8;background:#fff"></div>
<div class="a gh" style="left:266px;top:144px;width:1398px;height:26px;"></div>
<div class="a" style="left:266px;top:170px;width:1398px;height:1px;background:#99bbe8"></div>
<div class="a srt" style="left:289px;top:147px;letter-spacing:0.100px;line-height:21px;height:21px;">userID</div>
<div class="a srt" style="left:346px;top:147px;letter-spacing:-0.249px;line-height:21px;height:21px;">ppEmail</div>
<div class="a srt" style="left:408px;top:147px;letter-spacing:-0.070px;line-height:21px;height:21px;">invitedBy</div>
<div class="a srt" style="left:476px;top:147px;letter-spacing:0.116px;line-height:21px;height:21px;">payType</div>
<div class="a srt" style="left:543px;top:147px;letter-spacing:-0.088px;line-height:21px;height:21px;">pubUserWall</div>
<div class="a srt" style="left:629px;top:147px;letter-spacing:0.044px;line-height:21px;height:21px;">active</div>
<div class="a srt" style="left:682px;top:147px;letter-spacing:0.067px;line-height:21px;height:21px;">charityID</div>
<div class="a srt" style="left:750px;top:147px;letter-spacing:-0.168px;line-height:21px;height:21px;">PPID</div>
<div class="a srt" style="left:799px;top:147px;letter-spacing:-0.053px;line-height:21px;height:21px;">reg_date</div>
<div class="a srt" style="left:866px;top:147px;letter-spacing:-0.118px;line-height:21px;height:21px;">upd</div>
<div class="a srt" style="left:908px;top:147px;letter-spacing:-0.158px;line-height:21px;height:21px;">notif</div>
<div class="a srt" style="left:952px;top:147px;letter-spacing:0.027px;line-height:21px;height:21px;">notifyInvAccept</div>
<div class="a srt" style="left:1051px;top:147px;letter-spacing:-0.054px;line-height:21px;height:21px;">notifyPayment</div>
<div class="a srt" style="left:1144px;top:147px;letter-spacing:-0.048px;line-height:21px;height:21px;">notifyBdUpdates</div>
<div class="a srt" style="left:1248px;top:147px;letter-spacing:-0.060px;line-height:21px;height:21px;">feePayed</div>
<div class="a srt" style="left:1318px;top:147px;letter-spacing:0.076px;line-height:21px;height:21px;">isCharityUser</div>
<div class="a srt" style="left:1409px;top:147px;letter-spacing:-0.134px;line-height:21px;height:21px;">minPaySumId</div>
<div class="a srt" style="left:1500px;top:147px;letter-spacing:0.028px;line-height:21px;height:21px;">userHashSum</div>
<div class="a srt" style="left:1594px;top:147px;letter-spacing:-0.062px;line-height:21px;height:21px;">invitationType</div>
<svg style="left:275px;top:155px" width="1400" height="6"><path d="M1 5 L4.5 1 L8 5 Z M58 5 L61.5 1 L65 5 Z M120 5 L123.5 1 L127 5 Z M188 5 L191.5 1 L195 5 Z M255 5 L258.5 1 L262 5 Z M341 5 L344.5 1 L348 5 Z M394 5 L397.5 1 L401 5 Z M462 5 L465.5 1 L469 5 Z M511 5 L514.5 1 L518 5 Z M578 5 L581.5 1 L585 5 Z M620 5 L623.5 1 L627 5 Z M664 5 L667.5 1 L671 5 Z M763 5 L766.5 1 L770 5 Z M856 5 L859.5 1 L863 5 Z M960 5 L963.5 1 L967 5 Z M1030 5 L1033.5 1 L1037 5 Z M1121 5 L1124.5 1 L1128 5 Z M1212 5 L1215.5 1 L1219 5 Z M1306 5 L1309.5 1 L1313 5 Z" fill="#5b8dd6"/></svg>
<div class="a" style="left:266px;top:171px;width:1398px;height:826px;overflow:hidden">
<div class="a" style="left:0;top:0;width:1500px;height:50px;background:linear-gradient(#f9f9f9 0,#f9f9f9 24px,#e6e6e6 24px,#e6e6e6 50px)"></div>
<div class="a" style="left:0;top:49px;width:1500px;height:1px;background:#d0d0d0"></div>
<div class="a" style="left:0px;top:0;width:30px;height:50px;background:linear-gradient(#f9f9f9 0,#f9f9f9 35px,#eeeeef 37px,#e9e9ea 100%)"></div>
<div class="cell" style="left:7px;top:14px;font-weight:bold">№</div>
<div class="a" style="left:30px;top:1px;width:1px;height:49px;background:#d0d0d0"></div>
<div class="a" style="left:31px;top:1px;width:1px;height:49px;background:#f2f2f2"></div>
<div class="fin" style="left:34px;top:26px;width:94px;height:22px"></div>
<svg style="left:40px;top:4px" width="9" height="17"><circle cx="4.5" cy="4.5" r="3.8" fill="#f0b830" stroke="#c08818" stroke-width="0.8"/><circle cx="4.5" cy="3.5" r="1.1" fill="#fff"/><path d="M3.4 8 V15.5 L4.5 16.5 L5.8 15.5 V14 L5 13.2 L5.8 12.5 L5 11.7 L5.8 11 V8 Z" fill="#e8a820" stroke="#b07a10" stroke-width="0.6"/></svg>
<div class="cell" style="left:52px;top:2px;letter-spacing:0.100px;">userID</div>
<div class="a" style="left:130px;top:1px;width:1px;height:49px;background:#d0d0d0"></div>
<div class="a" style="left:131px;top:1px;width:1px;height:49px;background:#f2f2f2"></div>
<div class="fin" style="left:134px;top:26px;width:94px;height:22px"></div>
<div class="cell" style="left:139px;top:26px;line-height:22px;letter-spacing:-0.255px;">&lt;&gt; 0</div>
<div class="cell" style="left:137px;top:2px;letter-spacing:-0.070px;">invitedBy</div>
<div class="a" style="left:230px;top:1px;width:1px;height:49px;background:#d0d0d0"></div>
<div class="a" style="left:231px;top:1px;width:1px;height:49px;background:#f2f2f2"></div>
<div class="fin" style="left:234px;top:26px;width:94px;height:22px"></div>
<div class="cell" style="left:237px;top:2px;letter-spacing:0.116px;">payType</div>
<div class="a" style="left:330px;top:1px;width:1px;height:49px;background:#d0d0d0"></div>
<div class="a" style="left:331px;top:1px;width:1px;height:49px;background:#f2f2f2"></div>
<div class="fin" style="left:334px;top:26px;width:94px;height:22px"></div>
<div class="cell" style="left:337px;top:2px;letter-spacing:-0.088px;">pubUserWall</div>
<div class="a" style="left:430px;top:1px;width:1px;height:49px;background:#d0d0d0"></div>
<div class="a" style="left:431px;top:1px;width:1px;height:49px;background:#f2f2f2"></div>
<div class="fin" style="left:434px;top:26px;width:94px;height:22px"></div>
<div class="cell" style="left:439px;top:26px;line-height:22px;letter-spacing:-0.271px;">=1</div>
<div class="cell" style="left:437px;top:2px;letter-spacing:0.044px;">active</div>
<div class="a" style="left:530px;top:1px;width:1px;height:49px;background:#d0d0d0"></div>
<div class="a" style="left:531px;top:1px;width:1px;height:49px;background:#f2f2f2"></div>
<div class="fin" style="left:534px;top:26px;width:94px;height:22px"></div>
<div class="cell" style="left:537px;top:2px;letter-spacing:0.067px;">charityID</div>
<div class="a" style="left:630px;top:1px;width:1px;height:49px;background:#d0d0d0"></div>
<div class="a" style="left:631px;top:1px;width:1px;height:49px;background:#f2f2f2"></div>
<div class="fin" style="left:634px;top:26px;width:94px;height:22px"></div>
<div class="cell" style="left:637px;top:2px;letter-spacing:-0.168px;">PPID</div>
<div class="a" style="left:730px;top:1px;width:1px;height:49px;background:#d0d0d0"></div>
<div class="a" style="left:731px;top:1px;width:1px;height:49px;background:#f2f2f2"></div>
<div class="fin" style="left:734px;top:26px;width:144px;height:22px"></div>
<div class="cell" style="left:737px;top:2px;letter-spacing:-0.053px;">reg_date</div>
<div class="a" style="left:880px;top:1px;width:1px;height:49px;background:#d0d0d0"></div>
<div class="a" style="left:881px;top:1px;width:1px;height:49px;background:#f2f2f2"></div>
<div class="fin" style="left:884px;top:26px;width:94px;height:22px"></div>
<div class="cell" style="left:887px;top:2px;letter-spacing:-0.118px;">upd</div>
<div class="a" style="left:980px;top:1px;width:1px;height:49px;background:#d0d0d0"></div>
<div class="a" style="left:981px;top:1px;width:1px;height:49px;background:#f2f2f2"></div>
<div class="fin" style="left:984px;top:26px;width:94px;height:22px"></div>
<div class="cell" style="left:987px;top:2px;letter-spacing:-0.158px;">notif</div>
<div class="a" style="left:1080px;top:1px;width:1px;height:49px;background:#d0d0d0"></div>
<div class="a" style="left:1081px;top:1px;width:1px;height:49px;background:#f2f2f2"></div>
<div class="fin" style="left:1084px;top:26px;width:94px;height:22px"></div>
<div class="cell" style="left:1087px;top:2px;letter-spacing:0.027px;">notifyInvAccept</div>
<div class="a" style="left:1180px;top:1px;width:1px;height:49px;background:#d0d0d0"></div>
<div class="a" style="left:1181px;top:1px;width:1px;height:49px;background:#f2f2f2"></div>
<div class="fin" style="left:1184px;top:26px;width:94px;height:22px"></div>
<div class="cell" style="left:1187px;top:2px;letter-spacing:-0.054px;">notifyPayment</div>
<div class="a" style="left:1280px;top:1px;width:1px;height:49px;background:#d0d0d0"></div>
<div class="a" style="left:1281px;top:1px;width:1px;height:49px;background:#f2f2f2"></div>
<div class="fin" style="left:1284px;top:26px;width:94px;height:22px"></div>
<div class="cell" style="left:1287px;top:2px;letter-spacing:-0.048px;">notifyBdUpdates</div>
<div class="a" style="left:1380px;top:1px;width:1px;height:49px;background:#d0d0d0"></div>
<div class="a" style="left:1381px;top:1px;width:1px;height:49px;background:#f2f2f2"></div>
<div class="fin" style="left:1384px;top:26px;width:94px;height:22px"></div>
<div class="cell" style="left:1387px;top:2px;letter-spacing:-0.060px;">feePayed</div>
<div class="a" style="left:1480px;top:1px;width:1px;height:49px;background:#d0d0d0"></div>
<div class="a" style="left:1481px;top:1px;width:1px;height:49px;background:#f2f2f2"></div>
<div class="rw" style="top:50px"></div>
<div class="rn" style="top:50px"></div>
<div class="cell" style="left:0;width:25px;text-align:right;top:51px;color:#444">1</div>
<div class="cell" style="left:37px;top:51px;letter-spacing:-0.118px;">100000161998603</div>
<div class="cell" style="left:137px;top:51px;letter-spacing:-0.118px;">100000302548742</div>
<div class="cell" style="left:237px;top:51px;letter-spacing:-0.118px;">pp</div>
<div class="cell" style="left:337px;top:51px;letter-spacing:-0.118px;">1</div>
<div class="cell" style="left:437px;top:51px;letter-spacing:-0.118px;">1</div>
<div class="cell" style="left:537px;top:51px;letter-spacing:0.110px;">-1</div>
<div class="cell" style="left:637px;top:51px;letter-spacing:-0.118px;">0</div>
<div class="cell" style="left:737px;top:51px;letter-spacing:-0.060px;">2010-12-18 06:24:51</div>
<div class="cell" style="left:887px;top:51px;letter-spacing:-0.118px;">0</div>
<div class="cell" style="left:987px;top:51px;letter-spacing:-0.118px;">0</div>
<div class="cell" style="left:1087px;top:51px;letter-spacing:-0.118px;">1</div>
<div class="cell" style="left:1187px;top:51px;letter-spacing:-0.118px;">1</div>
<div class="cell" style="left:1287px;top:51px;letter-spacing:-0.118px;">1</div>
<div class="rw" style="top:71px"></div>
<div class="rn" style="top:71px"></div>
<div class="cell" style="left:0;width:25px;text-align:right;top:72px;color:#444">2</div>
<div class="cell" style="left:37px;top:72px;letter-spacing:-0.118px;">100000402628365</div>
<div class="cell" style="left:137px;top:72px;letter-spacing:-0.118px;">100000161998603</div>
<div class="cell" style="left:237px;top:72px;letter-spacing:0.191px;">ch</div>
<div class="cell" style="left:337px;top:72px;letter-spacing:-0.118px;">1</div>
<div class="cell" style="left:437px;top:72px;letter-spacing:-0.118px;">1</div>
<div class="cell" style="left:537px;top:72px;letter-spacing:-0.118px;">2</div>
<div class="cell" style="left:637px;top:72px;letter-spacing:-0.118px;">0</div>
<div class="cell" style="left:737px;top:72px;letter-spacing:-0.060px;">2010-12-18 06:34:27</div>
<div class="cell" style="left:887px;top:72px;letter-spacing:-0.118px;">0</div>
<div class="cell" style="left:987px;top:72px;letter-spacing:-0.118px;">0</div>
<div class="cell" style="left:1087px;top:72px;letter-spacing:-0.118px;">1</div>
<div class="cell" style="left:1187px;top:72px;letter-spacing:-0.118px;">1</div>
<div class="cell" style="left:1287px;top:72px;letter-spacing:-0.118px;">1</div>
<div class="rw" style="top:92px"></div>
<div class="rn" style="top:92px"></div>
<div class="cell" style="left:0;width:25px;text-align:right;top:93px;color:#444">3</div>
<div class="cell" style="left:37px;top:93px;letter-spacing:-0.118px;">100000615020003</div>
<div class="cell" style="left:137px;top:93px;letter-spacing:-0.118px;">535971330</div>
<div class="cell" style="left:237px;top:93px;letter-spacing:0.037px;">ppch</div>
<div class="cell" style="left:337px;top:93px;letter-spacing:-0.118px;">1</div>
<div class="cell" style="left:437px;top:93px;letter-spacing:-0.118px;">1</div>
<div class="cell" style="left:537px;top:93px;letter-spacing:-0.118px;">10</div>
<div class="cell" style="left:637px;top:93px;letter-spacing:-0.118px;">0</div>
<div class="cell" style="left:737px;top:93px;letter-spacing:-0.060px;">2010-12-08 12:20:58</div>
<div class="cell" style="left:887px;top:93px;letter-spacing:-0.118px;">0</div>
<div class="cell" style="left:987px;top:93px;letter-spacing:-0.118px;">0</div>
<div class="cell" style="left:1087px;top:93px;letter-spacing:-0.118px;">1</div>
<div class="cell" style="left:1187px;top:93px;letter-spacing:-0.118px;">1</div>
<div class="cell" style="left:1287px;top:93px;letter-spacing:-0.118px;">1</div>
<div class="rw" style="top:113px"></div>
<div class="rn" style="top:113px"></div>
<div class="cell" style="left:0;width:25px;text-align:right;top:114px;color:#444">4</div>
<div class="cell" style="left:37px;top:114px;letter-spacing:-0.118px;">100001280025213</div>
<div class="cell" style="left:137px;top:114px;letter-spacing:-0.118px;">100001541040617</div>
<div class="cell" style="left:237px;top:114px;letter-spacing:-0.118px;">pp</div>
<div class="cell" style="left:337px;top:114px;letter-spacing:-0.118px;">1</div>
<div class="cell" style="left:437px;top:114px;letter-spacing:-0.118px;">1</div>
<div class="cell" style="left:537px;top:114px;letter-spacing:0.110px;">-1</div>
<div class="cell" style="left:637px;top:114px;letter-spacing:-0.118px;">0</div>
<div class="cell" style="left:737px;top:114px;letter-spacing:-0.060px;">2011-03-16 14:50:58</div>
<div class="cell" style="left:887px;top:114px;letter-spacing:-0.118px;">0</div>
<div class="cell" style="left:987px;top:114px;letter-spacing:-0.118px;">0</div>
<div class="cell" style="left:1087px;top:114px;letter-spacing:-0.118px;">1</div>
<div class="cell" style="left:1187px;top:114px;letter-spacing:-0.118px;">1</div>
<div class="cell" style="left:1287px;top:114px;letter-spacing:-0.118px;">1</div>
<div class="rw" style="top:134px"></div>
<div class="rn" style="top:134px"></div>
<div class="cell" style="left:0;width:25px;text-align:right;top:135px;color:#444">5</div>
<div class="cell" style="left:37px;top:135px;letter-spacing:-0.118px;">100001465811594</div>
<div class="cell" style="left:137px;top:135px;letter-spacing:-0.118px;">529588668</div>
<div class="cell" style="left:237px;top:135px;letter-spacing:-0.118px;">pp</div>
<div class="cell" style="left:337px;top:135px;letter-spacing:-0.118px;">1</div>
<div class="cell" style="left:437px;top:135px;letter-spacing:-0.118px;">1</div>
<div class="cell" style="left:537px;top:135px;letter-spacing:-0.118px;">0</div>
<div class="cell" style="left:637px;top:135px;letter-spacing:-0.118px;">0</div>
<div class="cell" style="left:737px;top:135px;letter-spacing:-0.060px;">2010-12-08 12:17:56</div>
<div class="cell" style="left:887px;top:135px;letter-spacing:-0.118px;">0</div>
<div class="cell" style="left:987px;top:135px;letter-spacing:-0.118px;">0</div>
<div class="cell" style="left:1087px;top:135px;letter-spacing:-0.118px;">1</div>
<div class="cell" style="left:1187px;top:135px;letter-spacing:-0.118px;">1</div>
<div class="cell" style="left:1287px;top:135px;letter-spacing:-0.118px;">1</div>
<div class="rw" style="top:155px"></div>
<div class="rn" style="top:155px"></div>
<div class="cell" style="left:0;width:25px;text-align:right;top:156px;color:#444">6</div>
<div class="cell" style="left:37px;top:156px;letter-spacing:-0.118px;">100001613492782</div>
<div class="cell" style="left:137px;top:156px;letter-spacing:-0.118px;">100001541040617</div>
<div class="cell" style="left:237px;top:156px;letter-spacing:-0.118px;">pp</div>
<div class="cell" style="left:337px;top:156px;letter-spacing:-0.118px;">1</div>
<div class="cell" style="left:437px;top:156px;letter-spacing:-0.118px;">1</div>
<div class="cell" style="left:537px;top:156px;letter-spacing:-0.118px;">0</div>
<div class="cell" style="left:637px;top:156px;letter-spacing:-0.118px;">0</div>
<div class="cell" style="left:737px;top:156px;letter-spacing:-0.060px;">2010-12-01 10:19:00</div>
<div class="cell" style="left:887px;top:156px;letter-spacing:-0.118px;">0</div>
<div class="cell" style="left:987px;top:156px;letter-spacing:-0.118px;">0</div>
<div class="cell" style="left:1087px;top:156px;letter-spacing:-0.118px;">1</div>
<div class="cell" style="left:1187px;top:156px;letter-spacing:-0.118px;">1</div>
<div class="cell" style="left:1287px;top:156px;letter-spacing:-0.118px;">1</div>
<div class="rw" style="top:176px"></div>
<div class="rn" style="top:176px"></div>
<div class="cell" style="left:0;width:25px;text-align:right;top:177px;color:#444">7</div>
<div class="cell" style="left:37px;top:177px;letter-spacing:-0.118px;">100001718985942</div>
<div class="cell" style="left:137px;top:177px;letter-spacing:-0.118px;">560966399</div>
<div class="cell" style="left:237px;top:177px;letter-spacing:0.037px;">ppch</div>
<div class="cell" style="left:337px;top:177px;letter-spacing:-0.118px;">1</div>
<div class="cell" style="left:437px;top:177px;letter-spacing:-0.118px;">1</div>
<div class="cell" style="left:537px;top:177px;letter-spacing:-0.118px;">9</div>
<div class="cell" style="left:637px;top:177px;letter-spacing:-0.118px;">0</div>
<div class="cell" style="left:737px;top:177px;letter-spacing:-0.060px;">2010-12-03 18:01:09</div>
<div class="cell" style="left:887px;top:177px;letter-spacing:-0.118px;">0</div>
<div class="cell" style="left:987px;top:177px;letter-spacing:-0.118px;">0</div>
<div class="cell" style="left:1087px;top:177px;letter-spacing:-0.118px;">1</div>
<div class="cell" style="left:1187px;top:177px;letter-spacing:-0.118px;">1</div>
<div class="cell" style="left:1287px;top:177px;letter-spacing:-0.118px;">1</div>
<div class="rw" style="top:197px"></div>
<div class="rn" style="top:197px"></div>
<div class="cell" style="left:0;width:25px;text-align:right;top:198px;color:#444">8</div>
<div class="cell" style="left:37px;top:198px;letter-spacing:-0.118px;">100001837685662</div>
<div class="cell" style="left:137px;top:198px;letter-spacing:-0.118px;">100001909626166</div>
<div class="cell" style="left:337px;top:198px;letter-spacing:-0.118px;">1</div>
<div class="cell" style="left:437px;top:198px;letter-spacing:-0.118px;">1</div>
<div class="cell" style="left:537px;top:198px;letter-spacing:0.110px;">-1</div>
<div class="cell" style="left:637px;top:198px;letter-spacing:-0.118px;">0</div>
<div class="cell" style="left:737px;top:198px;letter-spacing:-0.060px;">2011-03-13 15:40:58</div>
<div class="cell" style="left:887px;top:198px;letter-spacing:-0.118px;">0</div>
<div class="cell" style="left:987px;top:198px;letter-spacing:-0.118px;">0</div>
<div class="cell" style="left:1087px;top:198px;letter-spacing:-0.118px;">1</div>
<div class="cell" style="left:1187px;top:198px;letter-spacing:-0.118px;">1</div>
<div class="cell" style="left:1287px;top:198px;letter-spacing:-0.118px;">1</div>
<div class="rw" style="top:218px"></div>
<div class="rn" style="top:218px"></div>
<div class="cell" style="left:0;width:25px;text-align:right;top:219px;color:#444">9</div>
<div class="cell" style="left:37px;top:219px;letter-spacing:-0.118px;">100001852451213</div>
<div class="cell" style="left:137px;top:219px;letter-spacing:-0.118px;">560966399</div>
<div class="cell" style="left:237px;top:219px;letter-spacing:-0.118px;">pp</div>
<div class="cell" style="left:337px;top:219px;letter-spacing:-0.118px;">1</div>
<div class="cell" style="left:437px;top:219px;letter-spacing:-0.118px;">1</div>
<div class="cell" style="left:537px;top:219px;letter-spacing:0.110px;">-1</div>
<div class="cell" style="left:637px;top:219px;letter-spacing:-0.118px;">0</div>
<div class="cell" style="left:737px;top:219px;letter-spacing:-0.060px;">2010-11-26 22:01:02</div>
<div class="cell" style="left:887px;top:219px;letter-spacing:-0.118px;">0</div>
<div class="cell" style="left:987px;top:219px;letter-spacing:-0.118px;">0</div>
<div class="cell" style="left:1087px;top:219px;letter-spacing:-0.118px;">1</div>
<div class="cell" style="left:1187px;top:219px;letter-spacing:-0.118px;">1</div>
<div class="cell" style="left:1287px;top:219px;letter-spacing:-0.118px;">1</div>
<div class="rw" style="top:239px"></div>
<div class="rn" style="top:239px"></div>
<div class="cell" style="left:0;width:25px;text-align:right;top:240px;color:#444">10</div>
<div class="cell" style="left:37px;top:240px;letter-spacing:-0.118px;">100001884095925</div>
<div class="cell" style="left:137px;top:240px;letter-spacing:-0.118px;">100001909626166</div>
<div class="cell" style="left:237px;top:240px;letter-spacing:-0.118px;">pp</div>
<div class="cell" style="left:337px;top:240px;letter-spacing:-0.118px;">1</div>
<div class="cell" style="left:437px;top:240px;letter-spacing:-0.118px;">1</div>
<div class="cell" style="left:537px;top:240px;letter-spacing:0.110px;">-1</div>
<div class="cell" style="left:637px;top:240px;letter-spacing:-0.118px;">0</div>
<div class="cell" style="left:737px;top:240px;letter-spacing:-0.060px;">2011-01-24 04:58:31</div>
<div class="cell" style="left:887px;top:240px;letter-spacing:-0.118px;">0</div>
<div class="cell" style="left:987px;top:240px;letter-spacing:-0.118px;">0</div>
<div class="cell" style="left:1087px;top:240px;letter-spacing:-0.118px;">1</div>
<div class="cell" style="left:1187px;top:240px;letter-spacing:-0.118px;">1</div>
<div class="cell" style="left:1287px;top:240px;letter-spacing:-0.118px;">1</div>
<div class="rw" style="top:260px"></div>
<div class="rn" style="top:260px"></div>
<div class="cell" style="left:0;width:25px;text-align:right;top:261px;color:#444">11</div>
<div class="cell" style="left:37px;top:261px;letter-spacing:-0.118px;">100001904133694</div>
<div class="cell" style="left:137px;top:261px;letter-spacing:-0.118px;">100001855503419</div>
<div class="cell" style="left:237px;top:261px;letter-spacing:-0.118px;">pp</div>
<div class="cell" style="left:337px;top:261px;letter-spacing:-0.118px;">1</div>
<div class="cell" style="left:437px;top:261px;letter-spacing:-0.118px;">1</div>
<div class="cell" style="left:537px;top:261px;letter-spacing:-0.118px;">1</div>
<div class="cell" style="left:637px;top:261px;letter-spacing:-0.118px;">0</div>
<div class="cell" style="left:737px;top:261px;letter-spacing:-0.060px;">2010-11-30 10:31:40</div>
<div class="cell" style="left:887px;top:261px;letter-spacing:-0.118px;">0</div>
<div class="cell" style="left:987px;top:261px;letter-spacing:-0.118px;">0</div>
<div class="cell" style="left:1087px;top:261px;letter-spacing:-0.118px;">1</div>
<div class="cell" style="left:1187px;top:261px;letter-spacing:-0.118px;">1</div>
<div class="cell" style="left:1287px;top:261px;letter-spacing:-0.118px;">1</div>
<div class="rw" style="top:281px"></div>
<div class="rn" style="top:281px"></div>
<div class="cell" style="left:0;width:25px;text-align:right;top:282px;color:#444">12</div>
<div class="cell" style="left:37px;top:282px;letter-spacing:-0.118px;">1001890634</div>
<div class="cell" style="left:137px;top:282px;letter-spacing:-0.118px;">560966399</div>
<div class="cell" style="left:237px;top:282px;letter-spacing:-0.118px;">pp</div>
<div class="cell" style="left:337px;top:282px;letter-spacing:-0.118px;">1</div>
<div class="cell" style="left:437px;top:282px;letter-spacing:-0.118px;">1</div>
<div class="cell" style="left:537px;top:282px;letter-spacing:-0.118px;">0</div>
<div class="cell" style="left:637px;top:282px;letter-spacing:-0.118px;">0</div>
<div class="cell" style="left:737px;top:282px;letter-spacing:-0.060px;">2010-12-02 04:31:18</div>
<div class="cell" style="left:887px;top:282px;letter-spacing:-0.118px;">0</div>
<div class="cell" style="left:987px;top:282px;letter-spacing:-0.118px;">0</div>
<div class="cell" style="left:1087px;top:282px;letter-spacing:-0.118px;">1</div>
<div class="cell" style="left:1187px;top:282px;letter-spacing:-0.118px;">1</div>
<div class="cell" style="left:1287px;top:282px;letter-spacing:-0.118px;">1</div>
<div class="rw" style="top:302px"></div>
<div class="rn" style="top:302px"></div>
<div class="cell" style="left:0;width:25px;text-align:right;top:303px;color:#444">13</div>
<div class="cell" style="left:37px;top:303px;letter-spacing:-0.118px;">1013007824</div>
<div class="cell" style="left:137px;top:303px;letter-spacing:-0.118px;">613150442</div>
<div class="cell" style="left:237px;top:303px;letter-spacing:-0.118px;">pp</div>
<div class="cell" style="left:337px;top:303px;letter-spacing:-0.118px;">0</div>
<div class="cell" style="left:437px;top:303px;letter-spacing:-0.118px;">1</div>
<div class="cell" style="left:537px;top:303px;letter-spacing:-0.118px;">0</div>
<div class="cell" style="left:637px;top:303px;letter-spacing:-0.118px;">0</div>
<div class="cell" style="left:737px;top:303px;letter-spacing:-0.060px;">2010-12-11 11:58:35</div>
<div class="cell" style="left:887px;top:303px;letter-spacing:-0.118px;">0</div>
<div class="cell" style="left:987px;top:303px;letter-spacing:-0.118px;">0</div>
<div class="cell" style="left:1087px;top:303px;letter-spacing:-0.118px;">1</div>
<div class="cell" style="left:1187px;top:303px;letter-spacing:-0.118px;">1</div>
<div class="cell" style="left:1287px;top:303px;letter-spacing:-0.118px;">1</div>
<div class="rw" style="top:323px"></div>
<div class="rn" style="top:323px"></div>
<div class="cell" style="left:0;width:25px;text-align:right;top:324px;color:#444">14</div>
<div class="cell" style="left:37px;top:324px;letter-spacing:-0.118px;">1061450111</div>
<div class="cell" style="left:137px;top:324px;letter-spacing:-0.118px;">560966399</div>
<div class="cell" style="left:237px;top:324px;letter-spacing:-0.118px;">pp</div>
<div class="cell" style="left:337px;top:324px;letter-spacing:-0.118px;">0</div>
<div class="cell" style="left:437px;top:324px;letter-spacing:-0.118px;">1</div>
<div class="cell" style="left:537px;top:324px;letter-spacing:-0.118px;">0</div>
<div class="cell" style="left:637px;top:324px;letter-spacing:-0.118px;">0</div>
<div class="cell" style="left:737px;top:324px;letter-spacing:-0.060px;">2010-12-01 16:27:53</div>
<div class="cell" style="left:887px;top:324px;letter-spacing:-0.118px;">0</div>
<div class="cell" style="left:987px;top:324px;letter-spacing:-0.118px;">0</div>
<div class="cell" style="left:1087px;top:324px;letter-spacing:-0.118px;">1</div>
<div class="cell" style="left:1187px;top:324px;letter-spacing:-0.118px;">1</div>
<div class="cell" style="left:1287px;top:324px;letter-spacing:-0.118px;">1</div>
<div class="rw" style="top:344px"></div>
<div class="rn" style="top:344px"></div>
<div class="cell" style="left:0;width:25px;text-align:right;top:345px;color:#444">15</div>
<div class="cell" style="left:37px;top:345px;letter-spacing:-0.118px;">1074074488</div>
<div class="cell" style="left:137px;top:345px;letter-spacing:-0.118px;">540253099</div>
<div class="cell" style="left:237px;top:345px;letter-spacing:-0.118px;">pp</div>
<div class="cell" style="left:337px;top:345px;letter-spacing:-0.118px;">0</div>
<div class="cell" style="left:437px;top:345px;letter-spacing:-0.118px;">1</div>
<div class="cell" style="left:537px;top:345px;letter-spacing:0.110px;">-1</div>
<div class="cell" style="left:637px;top:345px;letter-spacing:-0.118px;">0</div>
<div class="cell" style="left:737px;top:345px;letter-spacing:-0.060px;">2010-12-03 15:30:10</div>
<div class="cell" style="left:887px;top:345px;letter-spacing:-0.118px;">0</div>
<div class="cell" style="left:987px;top:345px;letter-spacing:-0.118px;">0</div>
<div class="cell" style="left:1087px;top:345px;letter-spacing:-0.118px;">1</div>
<div class="cell" style="left:1187px;top:345px;letter-spacing:-0.118px;">1</div>
<div class="cell" style="left:1287px;top:345px;letter-spacing:-0.118px;">1</div>
<div class="rw" style="top:365px"></div>
<div class="rn" style="top:365px"></div>
<div class="cell" style="left:0;width:25px;text-align:right;top:366px;color:#444">16</div>
<div class="cell" style="left:37px;top:366px;letter-spacing:-0.118px;">1253656998</div>
<div class="cell" style="left:137px;top:366px;letter-spacing:-0.118px;">506888007</div>
<div class="cell" style="left:237px;top:366px;letter-spacing:-0.118px;">pp</div>
<div class="cell" style="left:337px;top:366px;letter-spacing:-0.118px;">1</div>
<div class="cell" style="left:437px;top:366px;letter-spacing:-0.118px;">1</div>
<div class="cell" style="left:537px;top:366px;letter-spacing:0.110px;">-1</div>
<div class="cell" style="left:637px;top:366px;letter-spacing:-0.118px;">0</div>
<div class="cell" style="left:737px;top:366px;letter-spacing:-0.060px;">2011-01-27 08:13:19</div>
<div class="cell" style="left:887px;top:366px;letter-spacing:-0.118px;">0</div>
<div class="cell" style="left:987px;top:366px;letter-spacing:-0.118px;">0</div>
<div class="cell" style="left:1087px;top:366px;letter-spacing:-0.118px;">1</div>
<div class="cell" style="left:1187px;top:366px;letter-spacing:-0.118px;">1</div>
<div class="cell" style="left:1287px;top:366px;letter-spacing:-0.118px;">1</div>
<div class="rw" style="top:386px"></div>
<div class="rn" style="top:386px"></div>
<div class="cell" style="left:0;width:25px;text-align:right;top:387px;color:#444">17</div>
<div class="cell" style="left:37px;top:387px;letter-spacing:-0.118px;">1265716632</div>
<div class="cell" style="left:137px;top:387px;letter-spacing:-0.118px;">100001541040617</div>
<div class="cell" style="left:237px;top:387px;letter-spacing:-0.118px;">pp</div>
<div class="cell" style="left:337px;top:387px;letter-spacing:-0.118px;">1</div>
<div class="cell" style="left:437px;top:387px;letter-spacing:-0.118px;">1</div>
<div class="cell" style="left:537px;top:387px;letter-spacing:-0.118px;">0</div>
<div class="cell" style="left:637px;top:387px;letter-spacing:-0.118px;">0</div>
<div class="cell" style="left:737px;top:387px;letter-spacing:-0.060px;">2010-12-07 08:46:04</div>
<div class="cell" style="left:887px;top:387px;letter-spacing:-0.118px;">0</div>
<div class="cell" style="left:987px;top:387px;letter-spacing:-0.118px;">0</div>
<div class="cell" style="left:1087px;top:387px;letter-spacing:-0.118px;">1</div>
<div class="cell" style="left:1187px;top:387px;letter-spacing:-0.118px;">1</div>
<div class="cell" style="left:1287px;top:387px;letter-spacing:-0.118px;">1</div>
<div class="rw" style="top:407px"></div>
<div class="rn" style="top:407px"></div>
<div class="cell" style="left:0;width:25px;text-align:right;top:408px;color:#444">18</div>
<div class="cell" style="left:37px;top:408px;letter-spacing:-0.118px;">1279382834</div>
<div class="cell" style="left:137px;top:408px;letter-spacing:-0.118px;">100001541040617</div>
<div class="cell" style="left:237px;top:408px;letter-spacing:-0.118px;">pp</div>
<div class="cell" style="left:337px;top:408px;letter-spacing:-0.118px;">1</div>
<div class="cell" style="left:437px;top:408px;letter-spacing:-0.118px;">1</div>
<div class="cell" style="left:537px;top:408px;letter-spacing:-0.118px;">0</div>
<div class="cell" style="left:637px;top:408px;letter-spacing:-0.118px;">0</div>
<div class="cell" style="left:737px;top:408px;letter-spacing:-0.060px;">2010-11-30 13:18:18</div>
<div class="cell" style="left:887px;top:408px;letter-spacing:-0.118px;">0</div>
<div class="cell" style="left:987px;top:408px;letter-spacing:-0.118px;">0</div>
<div class="cell" style="left:1087px;top:408px;letter-spacing:-0.118px;">1</div>
<div class="cell" style="left:1187px;top:408px;letter-spacing:-0.118px;">1</div>
<div class="cell" style="left:1287px;top:408px;letter-spacing:-0.118px;">1</div>
<div class="rw" style="top:428px"></div>
<div class="rn" style="top:428px"></div>
<div class="cell" style="left:0;width:25px;text-align:right;top:429px;color:#444">19</div>
<div class="cell" style="left:37px;top:429px;letter-spacing:-0.118px;">1310591220</div>
<div class="cell" style="left:137px;top:429px;letter-spacing:-0.118px;">100001541040617</div>
<div class="cell" style="left:237px;top:429px;letter-spacing:-0.118px;">pp</div>
<div class="cell" style="left:337px;top:429px;letter-spacing:-0.118px;">1</div>
<div class="cell" style="left:437px;top:429px;letter-spacing:-0.118px;">1</div>
<div class="cell" style="left:537px;top:429px;letter-spacing:0.110px;">-1</div>
<div class="cell" style="left:637px;top:429px;letter-spacing:-0.118px;">0</div>
<div class="cell" style="left:737px;top:429px;letter-spacing:-0.060px;">2011-03-21 12:19:50</div>
<div class="cell" style="left:887px;top:429px;letter-spacing:-0.118px;">0</div>
<div class="cell" style="left:987px;top:429px;letter-spacing:-0.118px;">0</div>
<div class="cell" style="left:1087px;top:429px;letter-spacing:-0.118px;">1</div>
<div class="cell" style="left:1187px;top:429px;letter-spacing:-0.118px;">1</div>
<div class="cell" style="left:1287px;top:429px;letter-spacing:-0.118px;">1</div>
<div class="rw" style="top:449px"></div>
<div class="rn" style="top:449px"></div>
<div class="cell" style="left:0;width:25px;text-align:right;top:450px;color:#444">20</div>
<div class="cell" style="left:37px;top:450px;letter-spacing:-0.118px;">1407453784</div>
<div class="cell" style="left:137px;top:450px;letter-spacing:-0.118px;">540253099</div>
<div class="cell" style="left:237px;top:450px;letter-spacing:-0.118px;">pp</div>
<div class="cell" style="left:337px;top:450px;letter-spacing:-0.118px;">0</div>
<div class="cell" style="left:437px;top:450px;letter-spacing:-0.118px;">1</div>
<div class="cell" style="left:537px;top:450px;letter-spacing:-0.118px;">0</div>
<div class="cell" style="left:637px;top:450px;letter-spacing:-0.118px;">0</div>
<div class="cell" style="left:737px;top:450px;letter-spacing:-0.060px;">2010-12-08 12:30:35</div>
<div class="cell" style="left:887px;top:450px;letter-spacing:-0.118px;">0</div>
<div class="cell" style="left:987px;top:450px;letter-spacing:-0.118px;">0</div>
<div class="cell" style="left:1087px;top:450px;letter-spacing:-0.118px;">1</div>
<div class="cell" style="left:1187px;top:450px;letter-spacing:-0.118px;">1</div>
<div class="cell" style="left:1287px;top:450px;letter-spacing:-0.118px;">1</div>
<div class="rw" style="top:470px"></div>
<div class="rn" style="top:470px"></div>
<div class="cell" style="left:0;width:25px;text-align:right;top:471px;color:#444">21</div>
<div class="cell" style="left:37px;top:471px;letter-spacing:-0.118px;">1523205946</div>
<div class="cell" style="left:137px;top:471px;letter-spacing:-0.118px;">1279382834</div>
<div class="cell" style="left:237px;top:471px;letter-spacing:-0.118px;">pp</div>
<div class="cell" style="left:337px;top:471px;letter-spacing:-0.118px;">1</div>
<div class="cell" style="left:437px;top:471px;letter-spacing:-0.118px;">1</div>
<div class="cell" style="left:537px;top:471px;letter-spacing:0.110px;">-1</div>
<div class="cell" style="left:637px;top:471px;letter-spacing:-0.118px;">0</div>
<div class="cell" style="left:737px;top:471px;letter-spacing:-0.060px;">2010-12-29 08:58:32</div>
<div class="cell" style="left:887px;top:471px;letter-spacing:-0.118px;">0</div>
<div class="cell" style="left:987px;top:471px;letter-spacing:-0.118px;">0</div>
<div class="cell" style="left:1087px;top:471px;letter-spacing:-0.118px;">1</div>
<div class="cell" style="left:1187px;top:471px;letter-spacing:-0.118px;">1</div>
<div class="cell" style="left:1287px;top:471px;letter-spacing:-0.118px;">1</div>
<div class="rw" style="top:491px"></div>
<div class="rn" style="top:491px"></div>
<div class="cell" style="left:0;width:25px;text-align:right;top:492px;color:#444">22</div>
<div class="cell" style="left:37px;top:492px;letter-spacing:-0.118px;">1569847178</div>
<div class="cell" style="left:137px;top:492px;letter-spacing:-0.118px;">100001718985942</div>
<div class="cell" style="left:237px;top:492px;letter-spacing:-0.118px;">pp</div>
<div class="cell" style="left:337px;top:492px;letter-spacing:-0.118px;">1</div>
<div class="cell" style="left:437px;top:492px;letter-spacing:-0.118px;">1</div>
<div class="cell" style="left:537px;top:492px;letter-spacing:-0.118px;">0</div>
<div class="cell" style="left:637px;top:492px;letter-spacing:-0.118px;">0</div>
<div class="cell" style="left:737px;top:492px;letter-spacing:-0.060px;">2010-12-05 13:34:55</div>
<div class="cell" style="left:887px;top:492px;letter-spacing:-0.118px;">0</div>
<div class="cell" style="left:987px;top:492px;letter-spacing:-0.118px;">0</div>
<div class="cell" style="left:1087px;top:492px;letter-spacing:-0.118px;">1</div>
<div class="cell" style="left:1187px;top:492px;letter-spacing:-0.118px;">1</div>
<div class="cell" style="left:1287px;top:492px;letter-spacing:-0.118px;">1</div>
<div class="rw" style="top:512px"></div>
<div class="rn" style="top:512px"></div>
<div class="cell" style="left:0;width:25px;text-align:right;top:513px;color:#444">23</div>
<div class="cell" style="left:37px;top:513px;letter-spacing:-0.118px;">223405645</div>
<div class="cell" style="left:137px;top:513px;letter-spacing:-0.118px;">576854847</div>
<div class="cell" style="left:237px;top:513px;letter-spacing:-0.118px;">pp</div>
<div class="cell" style="left:337px;top:513px;letter-spacing:-0.118px;">0</div>
<div class="cell" style="left:437px;top:513px;letter-spacing:-0.118px;">1</div>
<div class="cell" style="left:537px;top:513px;letter-spacing:-0.118px;">0</div>
<div class="cell" style="left:637px;top:513px;letter-spacing:-0.118px;">0</div>
<div class="cell" style="left:737px;top:513px;letter-spacing:-0.060px;">2010-12-03 12:32:02</div>
<div class="cell" style="left:887px;top:513px;letter-spacing:-0.118px;">0</div>
<div class="cell" style="left:987px;top:513px;letter-spacing:-0.118px;">0</div>
<div class="cell" style="left:1087px;top:513px;letter-spacing:-0.118px;">1</div>
<div class="cell" style="left:1187px;top:513px;letter-spacing:-0.118px;">1</div>
<div class="cell" style="left:1287px;top:513px;letter-spacing:-0.118px;">1</div>
<div class="rw" style="top:533px"></div>
<div class="rn" style="top:533px"></div>
<div class="cell" style="left:0;width:25px;text-align:right;top:534px;color:#444">24</div>
<div class="cell" style="left:37px;top:534px;letter-spacing:-0.118px;">526135353</div>
<div class="cell" style="left:137px;top:534px;letter-spacing:-0.118px;">576854847</div>
<div class="cell" style="left:237px;top:534px;letter-spacing:0.037px;">ppch</div>
<div class="cell" style="left:337px;top:534px;letter-spacing:-0.118px;">0</div>
<div class="cell" style="left:437px;top:534px;letter-spacing:-0.118px;">1</div>
<div class="cell" style="left:537px;top:534px;letter-spacing:-0.118px;">12</div>
<div class="cell" style="left:637px;top:534px;letter-spacing:-0.118px;">0</div>
<div class="cell" style="left:737px;top:534px;letter-spacing:-0.060px;">2010-12-01 16:15:52</div>
<div class="cell" style="left:887px;top:534px;letter-spacing:-0.118px;">0</div>
<div class="cell" style="left:987px;top:534px;letter-spacing:-0.118px;">0</div>
<div class="cell" style="left:1087px;top:534px;letter-spacing:-0.118px;">1</div>
<div class="cell" style="left:1187px;top:534px;letter-spacing:-0.118px;">1</div>
<div class="cell" style="left:1287px;top:534px;letter-spacing:-0.118px;">1</div>
<div class="rw" style="top:554px"></div>
<div class="rn" style="top:554px"></div>
<div class="cell" style="left:0;width:25px;text-align:right;top:555px;color:#444">25</div>
<div class="cell" style="left:37px;top:555px;letter-spacing:-0.118px;">529588668</div>
<div class="cell" style="left:137px;top:555px;letter-spacing:0.110px;">-1</div>
<div class="cell" style="left:237px;top:555px;letter-spacing:-0.118px;">pp</div>
<div class="cell" style="left:337px;top:555px;letter-spacing:-0.118px;">1</div>
<div class="cell" style="left:437px;top:555px;letter-spacing:-0.118px;">1</div>
<div class="cell" style="left:537px;top:555px;letter-spacing:-0.118px;">0</div>
<div class="cell" style="left:637px;top:555px;letter-spacing:-0.118px;">0</div>
<div class="cell" style="left:737px;top:555px;letter-spacing:-0.060px;">2010-12-04 14:02:30</div>
<div class="cell" style="left:887px;top:555px;letter-spacing:-0.118px;">0</div>
<div class="cell" style="left:987px;top:555px;letter-spacing:-0.118px;">0</div>
<div class="cell" style="left:1087px;top:555px;letter-spacing:-0.118px;">1</div>
<div class="cell" style="left:1187px;top:555px;letter-spacing:-0.118px;">1</div>
<div class="cell" style="left:1287px;top:555px;letter-spacing:-0.118px;">1</div>
<div class="rw" style="top:575px"></div>
<div class="rn" style="top:575px"></div>
<div class="cell" style="left:0;width:25px;text-align:right;top:576px;color:#444">26</div>
<div class="cell" style="left:37px;top:576px;letter-spacing:-0.118px;">535971330</div>
<div class="cell" style="left:137px;top:576px;letter-spacing:-0.118px;">576854847</div>
<div class="cell" style="left:237px;top:576px;letter-spacing:-0.118px;">pp</div>
<div class="cell" style="left:337px;top:576px;letter-spacing:-0.118px;">1</div>
<div class="cell" style="left:437px;top:576px;letter-spacing:-0.118px;">1</div>
<div class="cell" style="left:537px;top:576px;letter-spacing:-0.118px;">0</div>
<div class="cell" style="left:637px;top:576px;letter-spacing:-0.118px;">0</div>
<div class="cell" style="left:737px;top:576px;letter-spacing:-0.060px;">2010-12-01 08:52:00</div>
<div class="cell" style="left:887px;top:576px;letter-spacing:-0.118px;">0</div>
<div class="cell" style="left:987px;top:576px;letter-spacing:-0.118px;">0</div>
<div class="cell" style="left:1087px;top:576px;letter-spacing:-0.118px;">1</div>
<div class="cell" style="left:1187px;top:576px;letter-spacing:-0.118px;">1</div>
<div class="cell" style="left:1287px;top:576px;letter-spacing:-0.118px;">1</div>
<div class="rw" style="top:596px"></div>
<div class="rn" style="top:596px"></div>
<div class="cell" style="left:0;width:25px;text-align:right;top:597px;color:#444">27</div>
<div class="cell" style="left:37px;top:597px;letter-spacing:-0.118px;">536659922</div>
<div class="cell" style="left:137px;top:597px;letter-spacing:-0.118px;">535971330</div>
<div class="cell" style="left:237px;top:597px;letter-spacing:-0.118px;">pp</div>
<div class="cell" style="left:337px;top:597px;letter-spacing:-0.118px;">1</div>
<div class="cell" style="left:437px;top:597px;letter-spacing:-0.118px;">1</div>
<div class="cell" style="left:537px;top:597px;letter-spacing:-0.118px;">0</div>
<div class="cell" style="left:637px;top:597px;letter-spacing:-0.118px;">0</div>
<div class="cell" style="left:737px;top:597px;letter-spacing:-0.060px;">2010-12-11 12:06:13</div>
<div class="cell" style="left:887px;top:597px;letter-spacing:-0.118px;">0</div>
<div class="cell" style="left:987px;top:597px;letter-spacing:-0.118px;">0</div>
<div class="cell" style="left:1087px;top:597px;letter-spacing:-0.118px;">1</div>
<div class="cell" style="left:1187px;top:597px;letter-spacing:-0.118px;">1</div>
<div class="cell" style="left:1287px;top:597px;letter-spacing:-0.118px;">1</div>
<div class="rw" style="top:617px"></div>
<div class="rn" style="top:617px"></div>
<div class="cell" style="left:0;width:25px;text-align:right;top:618px;color:#444">28</div>
<div class="cell" style="left:37px;top:618px;letter-spacing:-0.118px;">540253099</div>
<div class="cell" style="left:137px;top:618px;letter-spacing:-0.118px;">560966399</div>
<div class="cell" style="left:237px;top:618px;letter-spacing:0.191px;">ch</div>
<div class="cell" style="left:337px;top:618px;letter-spacing:-0.118px;">1</div>
<div class="cell" style="left:437px;top:618px;letter-spacing:-0.118px;">1</div>
<div class="cell" style="left:537px;top:618px;letter-spacing:-0.118px;">9</div>
<div class="cell" style="left:637px;top:618px;letter-spacing:-0.118px;">0</div>
<div class="cell" style="left:737px;top:618px;letter-spacing:-0.060px;">2010-11-30 16:16:25</div>
<div class="cell" style="left:887px;top:618px;letter-spacing:-0.118px;">0</div>
<div class="cell" style="left:987px;top:618px;letter-spacing:-0.118px;">0</div>
<div class="cell" style="left:1087px;top:618px;letter-spacing:-0.118px;">1</div>
<div class="cell" style="left:1187px;top:618px;letter-spacing:-0.118px;">1</div>
<div class="cell" style="left:1287px;top:618px;letter-spacing:-0.118px;">1</div>
<div class="rw" style="top:638px"></div>
<div class="rn" style="top:638px"></div>
<div class="cell" style="left:0;width:25px;text-align:right;top:639px;color:#444">29</div>
<div class="cell" style="left:37px;top:639px;letter-spacing:-0.118px;">541580091</div>
<div class="cell" style="left:137px;top:639px;letter-spacing:-0.118px;">560966399</div>
<div class="cell" style="left:237px;top:639px;letter-spacing:-0.118px;">pp</div>
<div class="cell" style="left:337px;top:639px;letter-spacing:-0.118px;">1</div>
<div class="cell" style="left:437px;top:639px;letter-spacing:-0.118px;">1</div>
<div class="cell" style="left:537px;top:639px;letter-spacing:-0.118px;">0</div>
<div class="cell" style="left:637px;top:639px;letter-spacing:-0.118px;">0</div>
<div class="cell" style="left:737px;top:639px;letter-spacing:-0.060px;">2010-11-30 18:30:56</div>
<div class="cell" style="left:887px;top:639px;letter-spacing:-0.118px;">0</div>
<div class="cell" style="left:987px;top:639px;letter-spacing:-0.118px;">0</div>
<div class="cell" style="left:1087px;top:639px;letter-spacing:-0.118px;">1</div>
<div class="cell" style="left:1187px;top:639px;letter-spacing:-0.118px;">1</div>
<div class="cell" style="left:1287px;top:639px;letter-spacing:-0.118px;">1</div>
<div class="rw" style="top:659px"></div>
<div class="rn" style="top:659px"></div>
<div class="cell" style="left:0;width:25px;text-align:right;top:660px;color:#444">30</div>
<div class="cell" style="left:37px;top:660px;letter-spacing:-0.118px;">551230973</div>
<div class="cell" style="left:137px;top:660px;letter-spacing:-0.118px;">540253099</div>
<div class="cell" style="left:237px;top:660px;letter-spacing:-0.118px;">pp</div>
<div class="cell" style="left:337px;top:660px;letter-spacing:-0.118px;">1</div>
<div class="cell" style="left:437px;top:660px;letter-spacing:-0.118px;">1</div>
<div class="cell" style="left:537px;top:660px;letter-spacing:-0.118px;">0</div>
<div class="cell" style="left:637px;top:660px;letter-spacing:-0.118px;">0</div>
<div class="cell" style="left:737px;top:660px;letter-spacing:-0.060px;">2010-11-30 20:05:44</div>
<div class="cell" style="left:887px;top:660px;letter-spacing:-0.118px;">0</div>
<div class="cell" style="left:987px;top:660px;letter-spacing:-0.118px;">0</div>
<div class="cell" style="left:1087px;top:660px;letter-spacing:-0.118px;">0</div>
<div class="cell" style="left:1187px;top:660px;letter-spacing:-0.118px;">1</div>
<div class="cell" style="left:1287px;top:660px;letter-spacing:-0.118px;">1</div>
<div class="rw" style="top:680px"></div>
<div class="rn" style="top:680px"></div>
<div class="cell" style="left:0;width:25px;text-align:right;top:681px;color:#444">31</div>
<div class="cell" style="left:37px;top:681px;letter-spacing:-0.118px;">576854847</div>
<div class="cell" style="left:137px;top:681px;letter-spacing:0.110px;">-1</div>
<div class="cell" style="left:237px;top:681px;letter-spacing:0.037px;">ppch</div>
<div class="cell" style="left:337px;top:681px;letter-spacing:-0.118px;">0</div>
<div class="cell" style="left:437px;top:681px;letter-spacing:-0.118px;">1</div>
<div class="cell" style="left:537px;top:681px;letter-spacing:-0.118px;">12</div>
<div class="cell" style="left:637px;top:681px;letter-spacing:-0.118px;">0</div>
<div class="cell" style="left:737px;top:681px;letter-spacing:-0.060px;">2010-11-30 07:28:39</div>
<div class="cell" style="left:887px;top:681px;letter-spacing:-0.118px;">0</div>
<div class="cell" style="left:987px;top:681px;letter-spacing:-0.118px;">0</div>
<div class="cell" style="left:1087px;top:681px;letter-spacing:-0.118px;">1</div>
<div class="cell" style="left:1187px;top:681px;letter-spacing:-0.118px;">1</div>
<div class="cell" style="left:1287px;top:681px;letter-spacing:-0.118px;">1</div>
<div class="rw" style="top:701px"></div>
<div class="rn" style="top:701px"></div>
<div class="cell" style="left:0;width:25px;text-align:right;top:702px;color:#444">32</div>
<div class="cell" style="left:37px;top:702px;letter-spacing:-0.118px;">586266310</div>
<div class="cell" style="left:137px;top:702px;letter-spacing:-0.118px;">560966399</div>
<div class="cell" style="left:237px;top:702px;letter-spacing:-0.118px;">pp</div>
<div class="cell" style="left:337px;top:702px;letter-spacing:-0.118px;">1</div>
<div class="cell" style="left:437px;top:702px;letter-spacing:-0.118px;">1</div>
<div class="cell" style="left:537px;top:702px;letter-spacing:-0.118px;">0</div>
<div class="cell" style="left:637px;top:702px;letter-spacing:-0.118px;">0</div>
<div class="cell" style="left:737px;top:702px;letter-spacing:-0.060px;">2010-11-30 19:02:32</div>
<div class="cell" style="left:887px;top:702px;letter-spacing:-0.118px;">0</div>
<div class="cell" style="left:987px;top:702px;letter-spacing:-0.118px;">0</div>
<div class="cell" style="left:1087px;top:702px;letter-spacing:-0.118px;">1</div>
<div class="cell" style="left:1187px;top:702px;letter-spacing:-0.118px;">0</div>
<div class="cell" style="left:1287px;top:702px;letter-spacing:-0.118px;">0</div>
<div class="rw" style="top:722px"></div>
<div class="rn" style="top:722px"></div>
<div class="cell" style="left:0;width:25px;text-align:right;top:723px;color:#444">33</div>
<div class="cell" style="left:37px;top:723px;letter-spacing:-0.118px;">594765022</div>
<div class="cell" style="left:137px;top:723px;letter-spacing:-0.118px;">694651214</div>
<div class="cell" style="left:237px;top:723px;letter-spacing:-0.118px;">pp</div>
<div class="cell" style="left:337px;top:723px;letter-spacing:-0.118px;">0</div>
<div class="cell" style="left:437px;top:723px;letter-spacing:-0.118px;">1</div>
<div class="cell" style="left:537px;top:723px;letter-spacing:-0.118px;">0</div>
<div class="cell" style="left:637px;top:723px;letter-spacing:-0.118px;">0</div>
<div class="cell" style="left:737px;top:723px;letter-spacing:-0.060px;">2010-12-04 18:33:29</div>
<div class="cell" style="left:887px;top:723px;letter-spacing:-0.118px;">0</div>
<div class="cell" style="left:987px;top:723px;letter-spacing:-0.118px;">0</div>
<div class="cell" style="left:1087px;top:723px;letter-spacing:-0.118px;">1</div>
<div class="cell" style="left:1187px;top:723px;letter-spacing:-0.118px;">1</div>
<div class="cell" style="left:1287px;top:723px;letter-spacing:-0.118px;">1</div>
<div class="rw" style="top:743px"></div>
<div class="rn" style="top:743px"></div>
<div class="cell" style="left:0;width:25px;text-align:right;top:744px;color:#444">34</div>
<div class="cell" style="left:37px;top:744px;letter-spacing:-0.118px;">613150442</div>
<div class="cell" style="left:137px;top:744px;letter-spacing:-0.118px;">1103616459</div>
<div class="cell" style="left:237px;top:744px;letter-spacing:-0.118px;">pp</div>
<div class="cell" style="left:337px;top:744px;letter-spacing:-0.118px;">1</div>
<div class="cell" style="left:437px;top:744px;letter-spacing:-0.118px;">1</div>
<div class="cell" style="left:537px;top:744px;letter-spacing:-0.118px;">0</div>
<div class="cell" style="left:637px;top:744px;letter-spacing:-0.118px;">0</div>
<div class="cell" style="left:737px;top:744px;letter-spacing:-0.060px;">2010-12-09 10:57:31</div>
<div class="cell" style="left:887px;top:744px;letter-spacing:-0.118px;">0</div>
<div class="cell" style="left:987px;top:744px;letter-spacing:-0.118px;">0</div>
<div class="cell" style="left:1087px;top:744px;letter-spacing:-0.118px;">1</div>
<div class="cell" style="left:1187px;top:744px;letter-spacing:-0.118px;">1</div>
<div class="cell" style="left:1287px;top:744px;letter-spacing:-0.118px;">1</div>
<div class="rw" style="top:764px"></div>
<div class="rn" style="top:764px"></div>
<div class="cell" style="left:0;width:25px;text-align:right;top:765px;color:#444">35</div>
<div class="cell" style="left:37px;top:765px;letter-spacing:-0.118px;">623549848</div>
<div class="cell" style="left:137px;top:765px;letter-spacing:-0.118px;">735229551</div>
<div class="cell" style="left:237px;top:765px;letter-spacing:-0.118px;">pp</div>
<div class="cell" style="left:337px;top:765px;letter-spacing:-0.118px;">0</div>
<div class="cell" style="left:437px;top:765px;letter-spacing:-0.118px;">1</div>
<div class="cell" style="left:537px;top:765px;letter-spacing:-0.118px;">0</div>
<div class="cell" style="left:637px;top:765px;letter-spacing:-0.118px;">0</div>
<div class="cell" style="left:737px;top:765px;letter-spacing:-0.060px;">2010-12-02 19:40:25</div>
<div class="cell" style="left:887px;top:765px;letter-spacing:-0.118px;">0</div>
<div class="cell" style="left:987px;top:765px;letter-spacing:-0.118px;">0</div>
<div class="cell" style="left:1087px;top:765px;letter-spacing:-0.118px;">0</div>
<div class="cell" style="left:1187px;top:765px;letter-spacing:-0.118px;">0</div>
<div class="cell" style="left:1287px;top:765px;letter-spacing:-0.118px;">0</div>
<div class="rw" style="top:785px"></div>
<div class="rn" style="top:785px"></div>
<div class="cell" style="left:0;width:25px;text-align:right;top:786px;color:#444">36</div>
<div class="cell" style="left:37px;top:786px;letter-spacing:-0.118px;">633625367</div>
<div class="cell" style="left:137px;top:786px;letter-spacing:-0.118px;">613150442</div>
<div class="cell" style="left:237px;top:786px;letter-spacing:0.037px;">ppch</div>
<div class="cell" style="left:337px;top:786px;letter-spacing:-0.118px;">0</div>
<div class="cell" style="left:437px;top:786px;letter-spacing:-0.118px;">1</div>
<div class="cell" style="left:537px;top:786px;letter-spacing:-0.118px;">8</div>
<div class="cell" style="left:637px;top:786px;letter-spacing:-0.118px;">0</div>
<div class="cell" style="left:737px;top:786px;letter-spacing:-0.060px;">2010-12-10 11:24:43</div>
<div class="cell" style="left:887px;top:786px;letter-spacing:-0.118px;">0</div>
<div class="cell" style="left:987px;top:786px;letter-spacing:-0.118px;">0</div>
<div class="cell" style="left:1087px;top:786px;letter-spacing:-0.118px;">0</div>
<div class="cell" style="left:1187px;top:786px;letter-spacing:-0.118px;">1</div>
<div class="cell" style="left:1287px;top:786px;letter-spacing:-0.118px;">0</div>
<div class="rw" style="top:806px"></div>
<div class="rn" style="top:806px"></div>
<div class="cell" style="left:0;width:25px;text-align:right;top:807px;color:#444">37</div>
<div class="cell" style="left:37px;top:807px;letter-spacing:-0.118px;">636629221</div>
<div class="cell" style="left:137px;top:807px;letter-spacing:-0.118px;">575030904</div>
<div class="cell" style="left:237px;top:807px;letter-spacing:-0.118px;">pp</div>
<div class="cell" style="left:337px;top:807px;letter-spacing:-0.118px;">1</div>
<div class="cell" style="left:437px;top:807px;letter-spacing:-0.118px;">1</div>
<div class="cell" style="left:537px;top:807px;letter-spacing:0.110px;">-1</div>
<div class="cell" style="left:637px;top:807px;letter-spacing:-0.118px;">0</div>
<div class="cell" style="left:737px;top:807px;letter-spacing:-0.060px;">2011-03-31 11:56:50</div>
<div class="cell" style="left:887px;top:807px;letter-spacing:-0.118px;">0</div>
<div class="cell" style="left:987px;top:807px;letter-spacing:-0.118px;">0</div>
<div class="cell" style="left:1087px;top:807px;letter-spacing:-0.118px;">1</div>
<div class="cell" style="left:1187px;top:807px;letter-spacing:-0.118px;">1</div>
<div class="cell" style="left:1287px;top:807px;letter-spacing:-0.118px;">1</div>
</div>
<div class="a" style="left:1649px;top:221px;width:15px;height:776px;background:#d0d0d0;border-left:1px solid #a0a0a0;border-right:1px solid #a0a0a0"></div>
<div class="a" style="left:1649px;top:221px;width:15px;height:14px;background:#fff;border:1px solid #a0a0a0;border-radius:3px 3px 0 0"></div>
<svg style="left:1653px;top:225px" width="9" height="6"><path d="M0.5 5 L4.5 0.5 L8.5 5 Z" fill="#a8a8a8"/></svg>
<div class="a" style="left:1649px;top:235px;width:15px;height:588px;background:linear-gradient(90deg,#f0f0f0 0,#f0f0f0 50%,#e4e4e4 50%);border:1px solid #a0a0a0"></div>
<svg style="left:1654px;top:525px" width="6" height="8"><path d="M0 1.5 H5 M0 4.5 H5 M0 7.5 H5" stroke="#a0a0a0" stroke-width="1"/></svg>
<div class="a" style="left:1649px;top:983px;width:15px;height:14px;background:#fff;border:1px solid #a0a0a0;border-radius:0 0 3px 3px"></div>
<svg style="left:1653px;top:987px" width="9" height="6"><path d="M0.5 0.5 L4.5 5 L8.5 0.5 Z" fill="#000"/></svg>
<div class="a" style="left:266px;top:997px;width:1384px;height:15px;background:#d0d0d0;border-top:1px solid #a0a0a0;border-bottom:1px solid #a0a0a0"></div>
<div class="a" style="left:266px;top:997px;width:15px;height:15px;background:#fff;border:1px solid #a0a0a0;border-radius:3px 0 0 3px"></div>
<svg style="left:270px;top:1000px" width="6" height="9"><path d="M5 0.5 L0.5 4.5 L5 8.5 Z" fill="#a8a8a8"/></svg>
<div class="a" style="left:280px;top:997px;width:858px;height:15px;background:linear-gradient(#f0f0f0 0,#f0f0f0 50%,#e4e4e4 50%);border:1px solid #a0a0a0"></div>
<svg style="left:706px;top:1001px" width="6" height="6"><path d="M0.5 0 V5 M2.5 0 V5 M4.5 0 V5" stroke="#a8a8a8" stroke-width="0.8"/></svg>
<div class="a" style="left:1634px;top:997px;width:15px;height:15px;background:#fff;border:1px solid #a0a0a0;border-radius:0 3px 3px 0"></div>
<svg style="left:1639px;top:1000px" width="6" height="9"><path d="M0.5 0.5 L5 4.5 L0.5 8.5 Z" fill="#000"/></svg>
<div class="a" style="left:1649px;top:997px;width:15px;height:15px;background:#fff"></div>
<div class="a" style="left:265px;top:1013px;width:1400px;height:38px;background:#dfe8f6"></div>
<div class="a" style="left:265px;top:1013px;width:1400px;height:3px;background:#eef3fa"></div>
<div class="a tbar" style="left:265px;top:1017px;width:1400px;height:27px;"></div>
<div class="a" style="left:267px;top:1016px;width:332px;height:1px;background:#99bbe8"></div>
<div class="a" style="left:265px;top:1044px;width:1400px;height:5px;background:#ccd8e8"></div>
<svg style="left:274px;top:1022px" width="180" height="18">
<defs><linearGradient id="pg" x1="0" x2="1"><stop offset="0" stop-color="#c8c8c8"/><stop offset="1" stop-color="#9a9a9a"/></linearGradient></defs>
<rect x="1" y="2" width="2.6" height="12" fill="url(#pg)"/><path d="M11.2 2 L5 8 L11.2 14 Z" fill="url(#pg)"/>
<path d="M30 2 L23 8 L30 14 Z" fill="url(#pg)"/>
<rect x="42.5" y="2" width="1.2" height="14" fill="#a8c8f0"/>
</svg>
<div class="a " style="left:322px;top:1020px;letter-spacing:-0.172px;line-height:22px;height:22px;font-size:11px;color:#000">Page</div>
<div class="a" style="left:350px;top:1020px;width:30px;height:19px;border:1px solid #b5b8c8;background:linear-gradient(#e8ebee 0,#fff 5px)"></div>
<div class="a " style="left:350px;top:1020px;letter-spacing:-0.118px;line-height:21px;height:21px;font-size:11px;width:25px;text-align:right">1</div>
<div class="a " style="left:381px;top:1020px;letter-spacing:-0.087px;line-height:22px;height:22px;font-size:11px">of 1</div>
<svg style="left:405px;top:1022px" width="80" height="18">
<rect x="1" y="2" width="1.2" height="14" fill="#a8c8f0"/>
<path d="M13 2 L19 8 L13 14 Z" fill="url(#pg)"/>
<path d="M33 2 L40 8 L33 14 Z" fill="url(#pg)"/><rect x="40.5" y="2" width="2.5" height="12" fill="url(#pg)"/>
<rect x="52" y="2" width="1.2" height="14" fill="#a8c8f0"/>
</svg>
<svg style="left:465px;top:1022px" width="16" height="16"><path d="M2 8 A6 6 0 0 1 12.5 4" stroke="#2a7ad8" stroke-width="2.2" fill="none"/><path d="M10 1 L15 4.5 L10 7 Z" fill="#2a7ad8"/><path d="M14 8 A6 6 0 0 1 3.5 12" stroke="#40a0f0" stroke-width="2.2" fill="none"/><path d="M6 15 L1 11.5 L6 9 Z" fill="#40a0f0"/></svg>
<div class="a " style="left:486px;top:1020px;letter-spacing:-0.063px;line-height:22px;height:22px;font-size:11px">Displaying 1 - 47 of 47</div>
<div class="a " style="left:1532px;top:1018px;letter-spacing:-0.048px;line-height:22px;height:22px;font-size:11px;color:#333">Clear filters</div>
<div class="a " style="left:1593px;top:1018px;letter-spacing:-0.004px;line-height:22px;height:22px;font-size:11px;color:#333">0.000105 sec</div>
<div class="a" style="left:498px;top:369px;width:98px;height:20px;border:1px solid #7eadd9;background:linear-gradient(#eef1f4 0,#fff 5px)"></div>
<div class="a" style="left:578px;top:370px;width:17px;height:18px;background:linear-gradient(#dfe9f6,#c3d5ec);border-left:1px solid #9ab8de"></div>
<svg style="left:581px;top:375px" width="11" height="8"><path d="M1 1.5 L5.5 6 L10 1.5" stroke="#1a3a80" stroke-width="2.2" fill="none"/></svg>
<div class="a" style="left:503px;top:372px;width:12px;height:14px;background:#3670d8"></div>
<div class="a " style="left:504px;top:368px;letter-spacing:-0.118px;line-height:21px;height:21px;color:#fff">pp</div>
<div class="a" style="left:498px;top:389px;width:98px;height:62px;background:#fff;border:1px solid #98c0f4;border-top:none;box-shadow:2px 3px 5px rgba(0,0,0,0.25)"></div>
<div class="a " style="left:502px;top:390px;letter-spacing:-0.118px;line-height:20px;height:20px;">pp</div>
<div class="a " style="left:502px;top:410px;letter-spacing:0.191px;line-height:20px;height:20px;">ch</div>
<div class="a" style="left:499px;top:430px;width:96px;height:20px;background:#dfe8f6;border:1px dotted #a3bae9"></div>
<div class="a " style="left:502px;top:430px;letter-spacing:0.037px;line-height:20px;height:20px;">ppch</div>
<svg style="left:559px;top:431px" width="26" height="32"><defs><filter id="cb" x="-50%" y="-50%" width="200%" height="200%"><feGaussianBlur stdDeviation="1.3"/></filter></defs><path d="M5 5 V24 L9.8 19.4 L13.4 27.5 L16.4 26.2 L13 18.2 H19.4 Z" fill="rgba(0,0,0,0.28)" filter="url(#cb)"/><path d="M1.5 1.5 V20 L6 15.8 L9.5 23.5 L12.5 22.2 L9.2 14.5 H15 Z" fill="#c8c8c8" stroke="#3a3a3a" stroke-width="1" stroke-linejoin="round"/></svg>
<div class="a" style="left:1670px;top:91px;width:249px;height:960px;border:1px solid #99bbe8;border-left:2px solid #99bbe8;background:#fff"></div>
<div class="a ph" style="left:1671px;top:92px;width:247px;height:25px;"></div>
<div class="a ptitle" style="left:1676px;top:92px;letter-spacing:0.055px;line-height:24px;height:24px;">Table User information</div>
<div class="a" style="left:1902px;top:97px;width:14px;height:15px;border:1px solid #99bbe8;border-radius:3px;background:linear-gradient(#fafcff,#dbe8f8)"></div>
<svg style="left:1905px;top:100px" width="10" height="10"><path d="M1.5 1.5 L4.5 4.5 L1.5 7.5 M5.5 1.5 L8.5 4.5 L5.5 7.5" stroke="#3d6cae" stroke-width="1.3" fill="none"/></svg>
<div class="a" style="left:1671px;top:117px;width:247px;height:25px;background:linear-gradient(#f9f9f9 0,#f3f3f3 50%,#e8e8e8 100%);border-bottom:1px solid #d0d0d0"></div>
<div class="a" style="left:1792px;top:118px;width:1px;height:23px;background:#d0d0d0"></div>
<div class="a" style="left:1793px;top:118px;width:1px;height:23px;background:#f6f6f6"></div>
<div class="a" style="left:1912px;top:118px;width:1px;height:23px;background:#d0d0d0"></div>
<div class="a " style="left:1679px;top:119px;letter-spacing:-0.086px;line-height:23px;height:23px;">Name</div>
<div class="a " style="left:1799px;top:119px;letter-spacing:-0.227px;line-height:23px;height:23px;">Value</div>
<div class="a" style="left:1671px;top:142px;width:242px;height:21px;border-bottom:1px solid #ededed;border-right:1px solid #ededed"></div>
<div class="a " style="left:1679px;top:143px;letter-spacing:-0.004px;line-height:21px;height:21px;">AUTO_INCREMENT</div>
<div class="a" style="left:1671px;top:163px;width:242px;height:21px;border-bottom:1px solid #ededed;border-right:1px solid #ededed"></div>
<div class="a " style="left:1679px;top:164px;letter-spacing:0.002px;line-height:21px;height:21px;">AVG_ROW_LENGTH</div>
<div class="a " style="left:1799px;top:164px;letter-spacing:-0.118px;line-height:21px;height:21px;">177</div>
<div class="a" style="left:1671px;top:184px;width:242px;height:21px;border-bottom:1px solid #ededed;border-right:1px solid #ededed"></div>
<div class="a " style="left:1679px;top:185px;letter-spacing:-0.119px;line-height:21px;height:21px;">CHECKSUM</div>
<div class="a" style="left:1671px;top:205px;width:242px;height:21px;border-bottom:1px solid #ededed;border-right:1px solid #ededed"></div>
<div class="a " style="left:1679px;top:206px;letter-spacing:-0.090px;line-height:21px;height:21px;">CHECK_TIME</div>
<div class="a" style="left:1671px;top:226px;width:242px;height:21px;border-bottom:1px solid #ededed;border-right:1px solid #ededed"></div>
<div class="a " style="left:1679px;top:227px;letter-spacing:-0.017px;line-height:21px;height:21px;">CREATE_OPTIONS</div>
<div class="a" style="left:1671px;top:247px;width:242px;height:21px;border-bottom:1px solid #ededed;border-right:1px solid #ededed"></div>
<div class="a " style="left:1679px;top:248px;letter-spacing:-0.092px;line-height:21px;height:21px;">CREATE_TIME</div>
<div class="a " style="left:1799px;top:248px;letter-spacing:-0.037px;line-height:21px;height:21px;">2011-06-12T21:23:...</div>
<div class="a" style="left:1671px;top:268px;width:242px;height:21px;border-bottom:1px solid #ededed;border-right:1px solid #ededed"></div>
<div class="a " style="left:1679px;top:269px;letter-spacing:-0.088px;line-height:21px;height:21px;">DATA_FREE</div>
<div class="a " style="left:1799px;top:269px;letter-spacing:-0.118px;line-height:21px;height:21px;">28311552</div>
<div class="a" style="left:1671px;top:289px;width:242px;height:21px;border-bottom:1px solid #ededed;border-right:1px solid #ededed"></div>
<div class="a " style="left:1679px;top:290px;letter-spacing:-0.007px;line-height:21px;height:21px;">DATA_LENGTH</div>
<div class="a " style="left:1799px;top:290px;letter-spacing:-0.118px;line-height:21px;height:21px;">65536</div>
<div class="a" style="left:1671px;top:310px;width:242px;height:21px;border-bottom:1px solid #ededed;border-right:1px solid #ededed"></div>
<div class="a " style="left:1679px;top:311px;letter-spacing:-0.029px;line-height:21px;height:21px;">ENGINE</div>
<div class="a " style="left:1799px;top:311px;letter-spacing:-0.115px;line-height:21px;height:21px;">InnoDB</div>
<div class="a" style="left:1671px;top:331px;width:242px;height:21px;border-bottom:1px solid #ededed;border-right:1px solid #ededed"></div>
<div class="a " style="left:1679px;top:332px;letter-spacing:-0.029px;line-height:21px;height:21px;">INDEX_LENGTH</div>
<div class="a " style="left:1799px;top:332px;letter-spacing:-0.118px;line-height:21px;height:21px;">0</div>
<div class="a" style="left:1671px;top:352px;width:242px;height:21px;border-bottom:1px solid #ededed;border-right:1px solid #ededed"></div>
<div class="a " style="left:1679px;top:353px;letter-spacing:-0.068px;line-height:21px;height:21px;">MAX_DATA_LENGTH</div>
<div class="a " style="left:1799px;top:353px;letter-spacing:-0.118px;line-height:21px;height:21px;">0</div>
<div class="a" style="left:1671px;top:373px;width:242px;height:21px;border-bottom:1px solid #ededed;border-right:1px solid #ededed"></div>
<div class="a " style="left:1679px;top:374px;letter-spacing:0.056px;line-height:21px;height:21px;">ROW_FORMAT</div>
<div class="a " style="left:1799px;top:374px;letter-spacing:-0.002px;line-height:21px;height:21px;">Compact</div>
<div class="a" style="left:1671px;top:394px;width:242px;height:21px;border-bottom:1px solid #ededed;border-right:1px solid #ededed"></div>
<div class="a " style="left:1679px;top:395px;letter-spacing:-0.041px;line-height:21px;height:21px;">TABLE_CATALOG</div>
<div class="a" style="left:1671px;top:415px;width:242px;height:21px;border-bottom:1px solid #ededed;border-right:1px solid #ededed"></div>
<div class="a " style="left:1679px;top:416px;letter-spacing:-0.021px;line-height:21px;height:21px;">TABLE_COLLATION</div>
<div class="a " style="left:1799px;top:416px;letter-spacing:-0.081px;line-height:21px;height:21px;">utf8_general_ci</div>
<div class="a" style="left:1671px;top:436px;width:242px;height:21px;border-bottom:1px solid #ededed;border-right:1px solid #ededed"></div>
<div class="a " style="left:1679px;top:437px;letter-spacing:-0.061px;line-height:21px;height:21px;">TABLE_COMMENT</div>
<div class="a" style="left:1671px;top:457px;width:242px;height:21px;border-bottom:1px solid #ededed;border-right:1px solid #ededed"></div>
<div class="a " style="left:1679px;top:458px;letter-spacing:-0.175px;line-height:21px;height:21px;">TABLE_NAME</div>
<div class="a " style="left:1799px;top:458px;letter-spacing:0.194px;line-height:21px;height:21px;">User</div>
<div class="a" style="left:1671px;top:478px;width:242px;height:21px;border-bottom:1px solid #ededed;border-right:1px solid #ededed"></div>
<div class="a " style="left:1679px;top:479px;letter-spacing:-0.118px;line-height:21px;height:21px;">TABLE_ROWS</div>
<div class="a " style="left:1799px;top:479px;letter-spacing:-0.118px;line-height:21px;height:21px;">370</div>
<div class="a" style="left:1671px;top:499px;width:242px;height:21px;border-bottom:1px solid #ededed;border-right:1px solid #ededed"></div>
<div class="a " style="left:1679px;top:500px;letter-spacing:-0.169px;line-height:21px;height:21px;">TABLE_SCHEMA</div>
<div class="a " style="left:1799px;top:500px;letter-spacing:0.191px;line-height:21px;height:21px;">cash</div>
<div class="a" style="left:1671px;top:520px;width:242px;height:21px;border-bottom:1px solid #ededed;border-right:1px solid #ededed"></div>
<div class="a " style="left:1679px;top:521px;letter-spacing:-0.170px;line-height:21px;height:21px;">TABLE_TYPE</div>
<div class="a " style="left:1799px;top:521px;letter-spacing:-0.225px;line-height:21px;height:21px;">BASE TABLE</div>
<div class="a" style="left:1671px;top:541px;width:242px;height:21px;border-bottom:1px solid #ededed;border-right:1px solid #ededed"></div>
<div class="a " style="left:1679px;top:542px;letter-spacing:-0.092px;line-height:21px;height:21px;">UPDATE_TIME</div>
<div class="a" style="left:1671px;top:562px;width:242px;height:21px;border-bottom:1px solid #ededed;border-right:1px solid #ededed"></div>
<div class="a " style="left:1679px;top:563px;letter-spacing:-0.073px;line-height:21px;height:21px;">VERSION</div>
<div class="a " style="left:1799px;top:563px;letter-spacing:-0.118px;line-height:21px;height:21px;">10</div>
<div class="a" style="left:0px;top:1049px;width:1920px;height:31px;background:#fff;border-top:3px solid #99bbe8;border-left:1px solid #99bbe8;border-bottom:2px solid #99bbe8"></div>
<div class="a" style="left:2px;top:1052px;width:21px;height:22px;border:1px solid #d0d0d0;border-radius:3px;background:linear-gradient(#fdfdfd 0,#f4f4f4 55%,#e6e6e6 55%,#ececec 100%)"></div>
<svg style="left:7px;top:1057px" width="15" height="15"><rect x="0" y="0" width="12" height="12" fill="#7aa4e0" stroke="#5a88cc" stroke-width="0.6"/><rect x="1" y="1" width="10" height="5" fill="#a8c4f0"/><path d="M4.5 7.5 H9 V5 L14 9.5 L9 14 V11.5 H4.5 Z" fill="#78c050" stroke="#208a18" stroke-width="0.9"/></svg>
<div class="a" style="left:24px;top:1052px;width:89px;height:26px;border:1px solid #8ab0e0;border-radius:3px;background:linear-gradient(#bfd3ea 0,#b9cfe8 45%,#a6c9f0 50%,#a0c6f0 92%,#d8e8f8 93%)"></div>
<div class="a " style="left:27px;top:1053px;letter-spacing:0.031px;line-height:25px;height:25px;font-size:11px">Table Cash.User</div>
<div class="a" style="left:1651px;top:1035px;width:269px;height:45px;background:#b8b8b8"></div>
<svg style="left:1651px;top:1035px" width="18" height="18"><circle cx="9" cy="9" r="8" fill="#14a8e6"/><circle cx="9" cy="9" r="6.6" fill="#30b8f0"/><path d="M4.2 8 C4.2 5 13.8 5 13.8 8 C13.8 10.5 11.5 11.3 10 11.5 L9.2 13 L8.4 11.5 C6.5 11.3 4.2 10.5 4.2 8 Z" fill="#fff"/><path d="M6 7.3 H12 M6 9 H12" stroke="#14a8e6" stroke-width="0.9"/></svg>
<svg style="left:1670px;top:1036px" width="40" height="19"><defs><filter id="sk" x="-20%" y="-40%" width="140%" height="180%"><feMorphology operator="dilate" radius="1.6" in="SourceAlpha" result="d"/><feGaussianBlur in="d" stdDeviation="0.8" result="b"/><feFlood flood-color="#12a6e8"/><feComposite in2="b" operator="in" result="bl"/><feMerge><feMergeNode in="bl"/><feMergeNode in="SourceGraphic"/></feMerge></filter></defs><text x="2.5" y="12.5" font-family="Liberation Sans" font-weight="bold" font-size="13.5" letter-spacing="-0.9" fill="#fff" filter="url(#sk)">skype</text></svg>
<svg style="left:1902px;top:1037px" width="14" height="14"><circle cx="7" cy="7" r="6.5" fill="#3a3a3a"/><path d="M4.2 4.2 L9.8 9.8 M9.8 4.2 L4.2 9.8" stroke="#fff" stroke-width="1.8"/></svg>
<div class="a " style="left:1658px;top:1055px;letter-spacing:-0.027px;line-height:20px;height:20px;font-size:11px;color:#222"><b style="font-size:10.5px">Артём</b>:&nbsp; <span style="font-size:12px">ок</span></div>
</body></html>
